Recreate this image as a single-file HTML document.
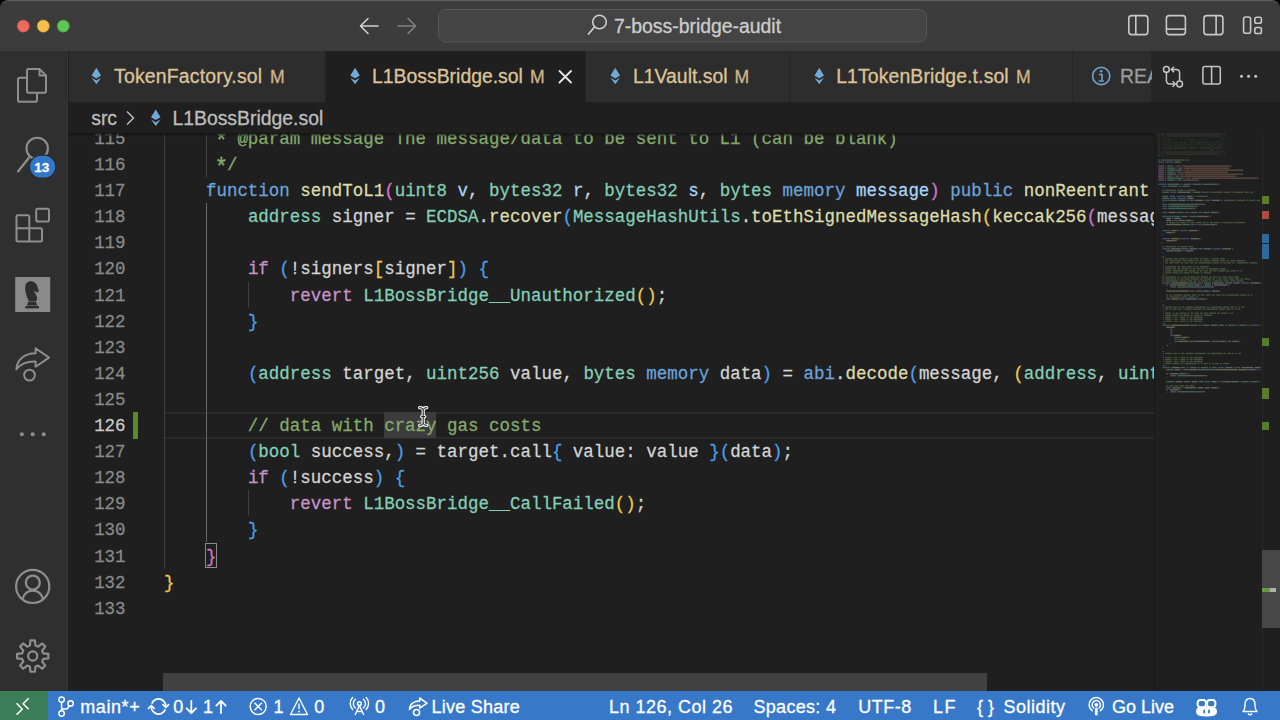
<!DOCTYPE html>
<html><head><meta charset="utf-8"><title>VS Code</title>
<style>
html,body{margin:0;padding:0;width:1280px;height:720px;overflow:hidden;background:#000}
*{box-sizing:border-box}
.win{position:absolute;left:0;top:0;width:1280px;height:720px;border-radius:8px 8px 0 0;overflow:hidden;background:#1f1f1f}
.a{position:absolute}
.ui{font-family:"Liberation Sans",sans-serif;white-space:pre;-webkit-text-stroke:0.3px currentColor}
.mono{font-family:"Liberation Mono",monospace;white-space:pre}
svg{position:absolute;overflow:visible}
.ln{position:absolute;left:68.6px;padding-top:1.4px;width:57px;text-align:right;font-family:"Liberation Mono",monospace;font-size:17.475px;transform:scaleY(1.07);transform-origin:0 19px;-webkit-text-stroke:0.25px currentColor;color:#8a8a8a;height:26.1px;line-height:26.1px}
.cl{position:absolute;left:164px;padding-top:1.4px;font-family:"Liberation Mono",monospace;font-size:17.475px;transform:scaleY(1.07);transform-origin:0 19px;-webkit-text-stroke:0.25px currentColor;white-space:pre;height:26.1px;line-height:26.1px;color:#d4d4d4}
.ast{display:inline-block;transform:translateY(3.2px) scale(1.3)}
</style></head><body>
<div class="win">

<div class="a" style="left:0;top:0;width:1280px;height:51px;background:#3c3c3c;border-top:1px solid #5e5e5e;border-radius:8px 8px 0 0"></div>
<svg style="left:0;top:0" width="1280" height="51"><circle cx="23.3" cy="26.1" r="6.1" fill="#ee6a5e" stroke="#c9493f" stroke-width="0.6"/><circle cx="43.3" cy="26.1" r="6.1" fill="#f5c04a" stroke="#c99a30" stroke-width="0.6"/><circle cx="63.3" cy="26.1" r="6.1" fill="#5fc555" stroke="#3f9a3a" stroke-width="0.6"/><path d="M360.5 26 H378 M368 18.5 L360.5 26 L368 33.5" stroke="#cfcfcf" stroke-width="1.6" fill="none" stroke-linecap="round" stroke-linejoin="round"/><path d="M398 26 H415.5 M408 18.5 L415.5 26 L408 33.5" stroke="#808080" stroke-width="1.6" fill="none" stroke-linecap="round" stroke-linejoin="round"/><rect x="438.5" y="9.5" width="488" height="32.5" rx="8" fill="#444444" stroke="#575757" stroke-width="1"/><circle cx="599.5" cy="22" r="6.8" stroke="#cfcfcf" stroke-width="1.6" fill="none"/><path d="M594.5 27 L588.5 34" stroke="#cfcfcf" stroke-width="1.7" stroke-linecap="round"/><rect x="1128.8" y="15.6" width="19" height="19" rx="2.8" stroke="#c8c8c8" stroke-width="1.6" fill="none"/><path d="M1135.8 15.6 V34.6" stroke="#c8c8c8" stroke-width="1.6"/><rect x="1166.4" y="15.6" width="19" height="19" rx="2.8" stroke="#c8c8c8" stroke-width="1.6" fill="none"/><path d="M1166.4 29.1 H1185.4" stroke="#c8c8c8" stroke-width="1.6"/><rect x="1203.9" y="15.6" width="19" height="19" rx="2.8" stroke="#c8c8c8" stroke-width="1.6" fill="none"/><path d="M1216.1 15.6 V34.6" stroke="#c8c8c8" stroke-width="1.6"/><rect x="1243.6" y="17" width="7" height="16.2" rx="2" stroke="#c8c8c8" stroke-width="1.6" fill="none"/><rect x="1254.8" y="17.2" width="6.6" height="6" rx="1.8" stroke="#c8c8c8" stroke-width="1.6" fill="none"/><rect x="1254.8" y="27.5" width="6.6" height="6" rx="1.8" stroke="#c8c8c8" stroke-width="1.6" fill="none"/></svg>
<div class="a ui" style="left:614px;top:14px;font-size:19.4px;line-height:24px;color:#cccccc">7-boss-bridge-audit</div>
<div class="a" style="left:0;top:51px;width:67.5px;height:640px;background:#2f2f2f"></div>
<div class="a" style="left:67px;top:51px;width:1px;height:640px;background:#343434"></div>
<svg style="left:0;top:0" width="68" height="691"><path d="M27 70.8 Q27 69 28.8 69 H39.5 L46 75.5 V90.9 Q46 92.7 44.2 92.7 H28.8 Q27 92.7 27 90.9 Z" stroke="#8e8e8e" stroke-width="2" fill="none" stroke-linejoin="round"/><path d="M39.5 69 V75.5 H46" stroke="#8e8e8e" stroke-width="2" fill="none" stroke-linejoin="round"/><path d="M27 77.8 H19.8 Q18 77.8 18 79.6 V99.9 Q18 101.7 19.8 101.7 H35.2 Q37 101.7 37 99.9 V92.7" stroke="#8e8e8e" stroke-width="2" fill="none" stroke-linejoin="round"/><circle cx="37.2" cy="148.4" r="10.7" stroke="#8e8e8e" stroke-width="2.1" fill="none"/><path d="M29.5 157 L18 171.5" stroke="#8e8e8e" stroke-width="2.2" stroke-linecap="round"/><rect x="29.5" y="155.2" width="26.3" height="23" rx="11.5" fill="#3277c8" stroke="#2a2a2a" stroke-width="1.2"/><path d="M16.5 241.5 V216.8 Q16.5 215.3 18 215.3 H27.8 Q29.3 215.3 29.3 216.8 V241.5 M16.5 228.3 H40.5 Q42 228.3 42 229.8 V240 Q42 241.5 40.5 241.5 H18 Q16.5 241.5 16.5 240" stroke="#8e8e8e" stroke-width="2" fill="none" stroke-linejoin="round"/><rect x="36.2" y="208.8" width="12.8" height="12.8" rx="1.8" stroke="#8e8e8e" stroke-width="2" fill="none"/><rect x="15.2" y="277" width="35" height="35" fill="#8a8a8a"/><path d="M16.3 369.3 C17 359 25 353.5 35.6 353.3 V348.2 L49 357.6 L35.6 366.8 V361.5 C28 361.2 21 363.5 16.3 369.3 Z" stroke="#8e8e8e" stroke-width="2" fill="none" stroke-linejoin="round"/><circle cx="29.5" cy="375.1" r="5.4" stroke="#8e8e8e" stroke-width="2" fill="none"/><circle cx="21.9" cy="434.3" r="2" fill="#8e8e8e"/><circle cx="32.7" cy="434.3" r="2" fill="#8e8e8e"/><circle cx="43.7" cy="434.3" r="2" fill="#8e8e8e"/><circle cx="32.7" cy="586.4" r="16.6" stroke="#8e8e8e" stroke-width="2.2" fill="none"/><circle cx="32.8" cy="582.6" r="7" stroke="#8e8e8e" stroke-width="2.3" fill="none"/><path d="M22.6 598.6 Q25.2 590.6 32.8 590.6 Q40.4 590.6 43 598.6" stroke="#8e8e8e" stroke-width="2.3" fill="none"/></svg>
<div class="a ui" style="left:28.7px;top:155.6px;width:26.3px;text-align:center;font-size:13.5px;line-height:23px;font-weight:bold;color:#fff">13</div>
<svg style="left:0;top:0" width="68" height="400"><path d="M30.2 281.3 C33.8 281 36.8 283.6 37.6 287.2 L38.7 290.6 Q38.9 292.6 37 292.4 L33.6 290.6 Q35.6 293.8 36.9 296.8 Q37.8 299.6 36.2 300.9 L28.8 300.9 Q26.8 297.4 25.8 293.2 Q24.6 288.4 25.4 285.2 Q26.8 281.6 30.2 281.3 Z" fill="#2e2e2e"/><path d="M28.4 301.6 H35.8 L37.3 305.4 H26.9 Z" fill="#2e2e2e"/><rect x="25.3" y="306" width="13.7" height="2.4" fill="#2e2e2e"/></svg>
<svg style="left:0;top:0" width="68" height="691"><path d="M43.24 653.31 L48.34 653.87 L48.34 658.33 L43.24 658.89 L42.13 661.57 L45.34 665.59 L42.19 668.74 L38.17 665.53 L35.49 666.64 L34.93 671.74 L30.47 671.74 L29.91 666.64 L27.23 665.53 L23.21 668.74 L20.06 665.59 L23.27 661.57 L22.16 658.89 L17.06 658.33 L17.06 653.87 L22.16 653.31 L23.27 650.63 L20.06 646.61 L23.21 643.46 L27.23 646.67 L29.91 645.56 L30.47 640.46 L34.93 640.46 L35.49 645.56 L38.17 646.67 L42.19 643.46 L45.34 646.61 L42.13 650.63 Z" stroke="#8e8e8e" stroke-width="2.2" fill="none" stroke-linejoin="round"/><circle cx="32.7" cy="656" r="4.6" stroke="#8e8e8e" stroke-width="2.2" fill="none"/></svg>
<div class="a" style="left:68.5px;top:51px;width:1211.5px;height:51px;background:#262626"></div>
<div class="a" style="left:68.5px;top:51px;width:257.0px;height:51px;background:#2d2d2d;border-right:1px solid #252525"></div>
<div class="a" style="left:325.5px;top:51px;width:260.5px;height:51px;background:#1f1f1f;border-right:1px solid #252525"></div>
<div class="a" style="left:586px;top:51px;width:204px;height:51px;background:#2d2d2d;border-right:1px solid #252525"></div>
<div class="a" style="left:790px;top:51px;width:282.5px;height:51px;background:#2d2d2d;border-right:1px solid #252525"></div>
<div class="a" style="left:1072.5px;top:51px;width:79.0px;height:51px;background:#2d2d2d;border-right:1px solid #252525"></div>
<div class="a" style="left:68.5px;top:102px;width:1211.5px;height:31px;background:#1f1f1f"></div>
<svg style="left:0;top:0" width="1280" height="140"><path d="M96.35 67.8 L101.1 75.5 L96.35 78.39999999999999 L91.6 75.5 Z" fill="#73a9d6"/><path d="M91.6 77.8 L96.35 80.6 L101.1 77.8 L96.35 84.3 Z" fill="#73a9d6"/><path d="M355.05 67.8 L359.8 75.5 L355.05 78.39999999999999 L350.3 75.5 Z" fill="#73a9d6"/><path d="M350.3 77.8 L355.05 80.6 L359.8 77.8 L355.05 84.3 Z" fill="#73a9d6"/><path d="M615.25 67.8 L620.0 75.5 L615.25 78.39999999999999 L610.5 75.5 Z" fill="#73a9d6"/><path d="M610.5 77.8 L615.25 80.6 L620.0 77.8 L615.25 84.3 Z" fill="#73a9d6"/><path d="M819.25 67.8 L824.0 75.5 L819.25 78.39999999999999 L814.5 75.5 Z" fill="#73a9d6"/><path d="M814.5 77.8 L819.25 80.6 L824.0 77.8 L819.25 84.3 Z" fill="#73a9d6"/><path d="M155.75 109.5 L160.5 117.2 L155.75 120.1 L151 117.2 Z" fill="#73a9d6"/><path d="M151 119.5 L155.75 122.3 L160.5 119.5 L155.75 126.0 Z" fill="#73a9d6"/><path d="M559.5 71 L571 82.5 M571 71 L559.5 82.5" stroke="#e8e8e8" stroke-width="1.8" stroke-linecap="round"/><circle cx="1101.2" cy="76" r="8.6" stroke="#6e9cc4" stroke-width="1.7" fill="none"/><circle cx="1101.2" cy="71.3" r="1.3" fill="#6e9cc4"/><path d="M1099 74.5 H1102 V81 M1098.8 81 H1103.8" stroke="#6e9cc4" stroke-width="1.7" fill="none"/><circle cx="1166.4" cy="69.4" r="2.9" stroke="#c5c5c5" stroke-width="1.5" fill="none"/><circle cx="1179.6" cy="84" r="2.9" stroke="#c5c5c5" stroke-width="1.5" fill="none"/><path d="M1166.4 72.3 V80.5 Q1166.4 84 1169.9 84 H1175" stroke="#c5c5c5" stroke-width="1.5" fill="none"/><path d="M1172.6 81.3 L1175.3 84 L1172.6 86.7" stroke="#c5c5c5" stroke-width="1.5" fill="none"/><path d="M1179.6 81.1 V73 Q1179.6 69.4 1176.1 69.4 H1171.5" stroke="#c5c5c5" stroke-width="1.5" fill="none"/><path d="M1174 66.7 L1171.3 69.4 L1174 72.1" stroke="#c5c5c5" stroke-width="1.5" fill="none"/><rect x="1202.9" y="66.6" width="17.4" height="17.4" rx="2" stroke="#c5c5c5" stroke-width="1.5" fill="none"/><path d="M1211.6 66.6 V84" stroke="#c5c5c5" stroke-width="1.5"/><circle cx="1241.5" cy="76.3" r="1.5" fill="#c5c5c5"/><circle cx="1248.6" cy="76.3" r="1.5" fill="#c5c5c5"/><circle cx="1255.7" cy="76.3" r="1.5" fill="#c5c5c5"/><path d="M127 111.5 L133.5 118 L127 124.5" stroke="#bdbdbd" stroke-width="1.5" fill="none"/></svg>
<div class="a ui" style="left:114px;top:64px;font-size:19.4px;line-height:24px;color:#dcc397;letter-spacing:0.2px;font-weight:normal">TokenFactory.sol</div>
<div class="a ui" style="left:270px;top:64.5px;font-size:17.6px;line-height:24px;color:#cdb48b;letter-spacing:0px;font-weight:normal">M</div>
<div class="a ui" style="left:372px;top:64px;font-size:19.4px;line-height:24px;color:#dcc397;letter-spacing:0px;font-weight:normal">L1BossBridge.sol</div>
<div class="a ui" style="left:530px;top:64.5px;font-size:17.6px;line-height:24px;color:#cdb48b;letter-spacing:0px;font-weight:normal">M</div>
<div class="a ui" style="left:633px;top:64px;font-size:19.4px;line-height:24px;color:#dcc397;letter-spacing:0px;font-weight:normal">L1Vault.sol</div>
<div class="a ui" style="left:734.5px;top:64.5px;font-size:17.6px;line-height:24px;color:#cdb48b;letter-spacing:0px;font-weight:normal">M</div>
<div class="a ui" style="left:836.2px;top:64px;font-size:19.4px;line-height:24px;color:#dcc397;letter-spacing:0.12px;font-weight:normal">L1TokenBridge.t.sol</div>
<div class="a ui" style="left:1016px;top:64.5px;font-size:17.6px;line-height:24px;color:#cdb48b;letter-spacing:0px;font-weight:normal">M</div>
<div class="a" style="left:1120px;top:51px;width:31.5px;height:51px;overflow:hidden"><div class="a ui" style="left:0px;top:13px;font-size:19.4px;line-height:24px;color:#9d9d9d;letter-spacing:0px;font-weight:normal">README.md</div></div>
<div class="a ui" style="left:91.2px;top:106px;font-size:19.4px;line-height:24px;color:#bdbdbd;letter-spacing:0px;font-weight:normal">src</div>
<div class="a ui" style="left:172.4px;top:106px;font-size:19.4px;line-height:24px;color:#bdbdbd;letter-spacing:0px;font-weight:normal">L1BossBridge.sol</div>
<div class="a" style="left:68.5px;top:133px;width:1085px;height:558px;overflow:hidden;background:#1f1f1f">
<div class="a" style="left:-68.5px;top:-133px;width:1280px;height:720px">
<div class="a" style="left:163px;top:412.00px;width:1000px;height:26.6px;border-top:2px solid #2a2a2a;border-bottom:2px solid #2a2a2a"></div>
<div class="a" style="left:384px;top:412.30px;width:52px;height:26px;background:#3c3c3c"></div>
<div class="a" style="left:163.8px;top:125.00px;width:1.5px;height:443.60px;background:#3e3e3e"></div>
<div class="a" style="left:205.6px;top:125.00px;width:1.5px;height:52.10px;background:#444444"></div>
<div class="a" style="left:205.6px;top:203.20px;width:1.6px;height:339.30px;background:#6a6a6a"></div>
<div class="a" style="left:247.6px;top:281.50px;width:1.5px;height:26.10px;background:#3e3e3e"></div>
<div class="a" style="left:247.6px;top:490.30px;width:1.5px;height:26.10px;background:#3e3e3e"></div>
<div class="a" style="left:205px;top:543.00px;width:11.5px;height:25px;border:1px solid #8b8b8b"></div>
<div class="a" style="left:133.2px;top:412.00px;width:4.6px;height:26.60px;background:#5b8a2b"></div>
<div class="ln" style="top:124.90px;color:#8a8a8a">115</div>
<div class="cl" style="top:124.90px"><span style="color:#86aa6e">     <span class="ast">*</span> @param message The message/data to be sent to L1 (can be blank)</span></div>
<div class="ln" style="top:151.00px;color:#8a8a8a">116</div>
<div class="cl" style="top:151.00px"><span style="color:#86aa6e">     <span class="ast">*</span>/</span></div>
<div class="ln" style="top:177.10px;color:#8a8a8a">117</div>
<div class="cl" style="top:177.10px"><span style="color:#d4d4d4">    </span><span style="color:#6ba3dc">function</span><span style="color:#d4d4d4"> </span><span style="color:#dcdcaa">sendToL1</span><span style="color:#d077cf">(</span><span style="color:#84cfb8">uint8</span><span style="color:#d4d4d4"> </span><span style="color:#a8d6f8">v</span><span style="color:#d4d4d4">, </span><span style="color:#84cfb8">bytes32</span><span style="color:#d4d4d4"> </span><span style="color:#a8d6f8">r</span><span style="color:#d4d4d4">, </span><span style="color:#84cfb8">bytes32</span><span style="color:#d4d4d4"> </span><span style="color:#a8d6f8">s</span><span style="color:#d4d4d4">, </span><span style="color:#84cfb8">bytes</span><span style="color:#d4d4d4"> </span><span style="color:#6ba3dc">memory</span><span style="color:#d4d4d4"> </span><span style="color:#a8d6f8">message</span><span style="color:#d077cf">)</span><span style="color:#d4d4d4"> </span><span style="color:#6ba3dc">public</span><span style="color:#d4d4d4"> </span><span style="color:#dcdcaa">nonReentrant</span><span style="color:#d4d4d4"> </span><span style="color:#dcdcaa">whenNotPaused</span><span style="color:#d4d4d4"> </span><span style="color:#d077cf">{</span></div>
<div class="ln" style="top:203.20px;color:#8a8a8a">118</div>
<div class="cl" style="top:203.20px"><span style="color:#d4d4d4">        </span><span style="color:#84cfb8">address</span><span style="color:#d4d4d4"> signer = </span><span style="color:#84cfb8">ECDSA</span><span style="color:#d4d4d4">.</span><span style="color:#dcdcaa">recover</span><span style="color:#4d9fea">(</span><span style="color:#84cfb8">MessageHashUtils</span><span style="color:#d4d4d4">.</span><span style="color:#dcdcaa">toEthSignedMessageHash</span><span style="color:#eacb55">(</span><span style="color:#dcdcaa">keccak256</span><span style="color:#d077cf">(</span><span style="color:#d4d4d4">message</span><span style="color:#d077cf">)</span><span style="color:#eacb55">)</span><span style="color:#d4d4d4">, v, r, s</span><span style="color:#4d9fea">)</span><span style="color:#d4d4d4">;</span></div>
<div class="ln" style="top:229.30px;color:#8a8a8a">119</div>
<div class="ln" style="top:255.40px;color:#8a8a8a">120</div>
<div class="cl" style="top:255.40px"><span style="color:#d4d4d4">        </span><span style="color:#c794c9">if</span><span style="color:#d4d4d4"> </span><span style="color:#4d9fea">(</span><span style="color:#d4d4d4">!signers</span><span style="color:#eacb55">[</span><span style="color:#d4d4d4">signer</span><span style="color:#eacb55">]</span><span style="color:#4d9fea">)</span><span style="color:#d4d4d4"> </span><span style="color:#4d9fea">{</span></div>
<div class="ln" style="top:281.50px;color:#8a8a8a">121</div>
<div class="cl" style="top:281.50px"><span style="color:#d4d4d4">            </span><span style="color:#c794c9">revert</span><span style="color:#d4d4d4"> </span><span style="color:#84cfb8">L1BossBridge__Unauthorized</span><span style="color:#eacb55">()</span><span style="color:#d4d4d4">;</span></div>
<div class="ln" style="top:307.60px;color:#8a8a8a">122</div>
<div class="cl" style="top:307.60px"><span style="color:#d4d4d4">        </span><span style="color:#4d9fea">}</span></div>
<div class="ln" style="top:333.70px;color:#8a8a8a">123</div>
<div class="ln" style="top:359.80px;color:#8a8a8a">124</div>
<div class="cl" style="top:359.80px"><span style="color:#d4d4d4">        </span><span style="color:#4d9fea">(</span><span style="color:#84cfb8">address</span><span style="color:#d4d4d4"> target, </span><span style="color:#84cfb8">uint256</span><span style="color:#d4d4d4"> value, </span><span style="color:#84cfb8">bytes</span><span style="color:#d4d4d4"> </span><span style="color:#6ba3dc">memory</span><span style="color:#d4d4d4"> data</span><span style="color:#4d9fea">)</span><span style="color:#d4d4d4"> = </span><span style="color:#6ba3dc">abi</span><span style="color:#d4d4d4">.</span><span style="color:#dcdcaa">decode</span><span style="color:#4d9fea">(</span><span style="color:#d4d4d4">message, </span><span style="color:#eacb55">(</span><span style="color:#84cfb8">address</span><span style="color:#d4d4d4">, </span><span style="color:#84cfb8">uint256</span><span style="color:#d4d4d4">, </span><span style="color:#84cfb8">bytes</span><span style="color:#eacb55">)</span><span style="color:#4d9fea">)</span><span style="color:#d4d4d4">;</span></div>
<div class="ln" style="top:385.90px;color:#8a8a8a">125</div>
<div class="ln" style="top:412.00px;color:#cccccc">126</div>
<div class="cl" style="top:412.00px"><span style="color:#86aa6e">        // data with crazy gas costs</span></div>
<div class="ln" style="top:438.10px;color:#8a8a8a">127</div>
<div class="cl" style="top:438.10px"><span style="color:#d4d4d4">        </span><span style="color:#4d9fea">(</span><span style="color:#84cfb8">bool</span><span style="color:#d4d4d4"> success,</span><span style="color:#4d9fea">)</span><span style="color:#d4d4d4"> = target.call</span><span style="color:#4d9fea">{</span><span style="color:#d4d4d4"> value: value </span><span style="color:#4d9fea">}</span><span style="color:#4d9fea">(</span><span style="color:#d4d4d4">data</span><span style="color:#4d9fea">)</span><span style="color:#d4d4d4">;</span></div>
<div class="ln" style="top:464.20px;color:#8a8a8a">128</div>
<div class="cl" style="top:464.20px"><span style="color:#d4d4d4">        </span><span style="color:#c794c9">if</span><span style="color:#d4d4d4"> </span><span style="color:#4d9fea">(</span><span style="color:#d4d4d4">!success</span><span style="color:#4d9fea">)</span><span style="color:#d4d4d4"> </span><span style="color:#4d9fea">{</span></div>
<div class="ln" style="top:490.30px;color:#8a8a8a">129</div>
<div class="cl" style="top:490.30px"><span style="color:#d4d4d4">            </span><span style="color:#c794c9">revert</span><span style="color:#d4d4d4"> </span><span style="color:#84cfb8">L1BossBridge__CallFailed</span><span style="color:#eacb55">()</span><span style="color:#d4d4d4">;</span></div>
<div class="ln" style="top:516.40px;color:#8a8a8a">130</div>
<div class="cl" style="top:516.40px"><span style="color:#d4d4d4">        </span><span style="color:#4d9fea">}</span></div>
<div class="ln" style="top:542.50px;color:#8a8a8a">131</div>
<div class="cl" style="top:542.50px"><span style="color:#d4d4d4">    </span><span style="color:#d077cf">}</span></div>
<div class="ln" style="top:568.60px;color:#8a8a8a">132</div>
<div class="cl" style="top:568.60px"><span style="color:#eacb55">}</span></div>
<div class="ln" style="top:594.70px;color:#8a8a8a">133</div>
</div>
</div>
<div class="a" style="left:68.5px;top:133px;width:1085px;height:4px;background:linear-gradient(#141414,rgba(20,20,20,0))"></div>
<svg style="left:0;top:0" width="1280" height="720"><path d="M419.6 407.6 Q422.6 407.4 423.2 409.6 Q423.8 407.4 426.8 407.6 M423.2 409.6 V423.4 M421.6 416.6 H424.8 M419.6 425.4 Q422.6 425.6 423.2 423.4 Q423.8 425.6 426.8 425.4" stroke="#f4f4f4" stroke-width="3.2" fill="none" stroke-linecap="round" stroke-linejoin="round"/><path d="M419.6 407.6 Q422.6 407.4 423.2 409.6 Q423.8 407.4 426.8 407.6 M423.2 409.6 V423.4 M421.6 416.6 H424.8 M419.6 425.4 Q422.6 425.6 423.2 423.4 Q423.8 425.6 426.8 425.4" stroke="#1a1a1a" stroke-width="1.0" fill="none" stroke-linecap="round"/></svg>
<div class="a" style="left:163px;top:672.5px;width:824px;height:18.5px;background:#414141"></div>
<div class="a" style="left:1153.5px;top:133px;width:108px;height:558px;background:#1f1f1f;border-left:1px solid #181818"></div>
<svg style="left:0;top:0" width="1280" height="720"><g opacity="0.36"><rect x="1158.2" y="133.5" width="1.8" height="0.9" fill="#86aa6e" opacity="0.6"/><rect x="1161.2" y="133.5" width="2.8" height="0.9" fill="#86aa6e" opacity="0.6"/><rect x="1165.3" y="133.5" width="55.6" height="0.9" fill="#86aa6e" opacity="0.6"/><rect x="1222.1" y="133.5" width="2.8" height="0.9" fill="#86aa6e" opacity="0.6"/><rect x="1158.2" y="135.5" width="1.8" height="0.9" fill="#86aa6e" opacity="0.6"/><rect x="1161.2" y="135.5" width="1.8" height="0.9" fill="#86aa6e" opacity="0.6"/><rect x="1166.3" y="135.5" width="53.5" height="0.9" fill="#86aa6e" opacity="0.6"/><rect x="1223.2" y="135.5" width="1.8" height="0.9" fill="#86aa6e" opacity="0.6"/><rect x="1158.2" y="137.5" width="1.8" height="0.9" fill="#86aa6e" opacity="0.6"/><rect x="1163.3" y="137.5" width="0.8" height="0.9" fill="#86aa6e" opacity="0.6"/><rect x="1165.3" y="137.5" width="0.8" height="0.9" fill="#86aa6e" opacity="0.6"/><rect x="1220.1" y="137.5" width="0.8" height="0.9" fill="#86aa6e" opacity="0.6"/><rect x="1222.1" y="137.5" width="0.8" height="0.9" fill="#86aa6e" opacity="0.6"/><rect x="1158.2" y="139.5" width="1.8" height="0.9" fill="#86aa6e" opacity="0.6"/><rect x="1163.3" y="139.5" width="0.8" height="0.9" fill="#86aa6e" opacity="0.6"/><rect x="1165.3" y="139.5" width="0.8" height="0.9" fill="#86aa6e" opacity="0.6"/><rect x="1167.3" y="139.5" width="3.8" height="0.9" fill="#86aa6e" opacity="0.6"/><rect x="1189.7" y="139.5" width="3.8" height="0.9" fill="#86aa6e" opacity="0.6"/><rect x="1200.8" y="139.5" width="0.8" height="0.9" fill="#86aa6e" opacity="0.6"/><rect x="1206.9" y="139.5" width="0.8" height="0.9" fill="#86aa6e" opacity="0.6"/><rect x="1220.1" y="139.5" width="0.8" height="0.9" fill="#86aa6e" opacity="0.6"/><rect x="1222.1" y="139.5" width="0.8" height="0.9" fill="#86aa6e" opacity="0.6"/><rect x="1158.2" y="141.6" width="1.8" height="0.9" fill="#86aa6e" opacity="0.6"/><rect x="1163.3" y="141.6" width="0.8" height="0.9" fill="#86aa6e" opacity="0.6"/><rect x="1165.3" y="141.6" width="1.8" height="0.9" fill="#86aa6e" opacity="0.6"/><rect x="1168.4" y="141.6" width="1.8" height="0.9" fill="#86aa6e" opacity="0.6"/><rect x="1171.4" y="141.6" width="0.8" height="0.9" fill="#86aa6e" opacity="0.6"/><rect x="1174.4" y="141.6" width="2.8" height="0.9" fill="#86aa6e" opacity="0.6"/><rect x="1179.5" y="141.6" width="2.8" height="0.9" fill="#86aa6e" opacity="0.6"/><rect x="1183.6" y="141.6" width="2.8" height="0.9" fill="#86aa6e" opacity="0.6"/><rect x="1188.7" y="141.6" width="0.8" height="0.9" fill="#86aa6e" opacity="0.6"/><rect x="1190.7" y="141.6" width="1.8" height="0.9" fill="#86aa6e" opacity="0.6"/><rect x="1193.7" y="141.6" width="0.8" height="0.9" fill="#86aa6e" opacity="0.6"/><rect x="1195.8" y="141.6" width="0.8" height="0.9" fill="#86aa6e" opacity="0.6"/><rect x="1197.8" y="141.6" width="4.8" height="0.9" fill="#86aa6e" opacity="0.6"/><rect x="1203.9" y="141.6" width="2.8" height="0.9" fill="#86aa6e" opacity="0.6"/><rect x="1207.9" y="141.6" width="0.8" height="0.9" fill="#86aa6e" opacity="0.6"/><rect x="1210.0" y="141.6" width="1.8" height="0.9" fill="#86aa6e" opacity="0.6"/><rect x="1213.0" y="141.6" width="0.8" height="0.9" fill="#86aa6e" opacity="0.6"/><rect x="1216.1" y="141.6" width="2.8" height="0.9" fill="#86aa6e" opacity="0.6"/><rect x="1220.1" y="141.6" width="0.8" height="0.9" fill="#86aa6e" opacity="0.6"/><rect x="1222.1" y="141.6" width="0.8" height="0.9" fill="#86aa6e" opacity="0.6"/><rect x="1158.2" y="143.6" width="1.8" height="0.9" fill="#86aa6e" opacity="0.6"/><rect x="1163.3" y="143.6" width="0.8" height="0.9" fill="#86aa6e" opacity="0.6"/><rect x="1165.3" y="143.6" width="1.8" height="0.9" fill="#86aa6e" opacity="0.6"/><rect x="1169.4" y="143.6" width="0.8" height="0.9" fill="#86aa6e" opacity="0.6"/><rect x="1171.4" y="143.6" width="0.8" height="0.9" fill="#86aa6e" opacity="0.6"/><rect x="1173.4" y="143.6" width="0.8" height="0.9" fill="#86aa6e" opacity="0.6"/><rect x="1175.5" y="143.6" width="0.8" height="0.9" fill="#86aa6e" opacity="0.6"/><rect x="1177.5" y="143.6" width="1.8" height="0.9" fill="#86aa6e" opacity="0.6"/><rect x="1180.5" y="143.6" width="2.8" height="0.9" fill="#86aa6e" opacity="0.6"/><rect x="1184.6" y="143.6" width="2.8" height="0.9" fill="#86aa6e" opacity="0.6"/><rect x="1188.7" y="143.6" width="0.8" height="0.9" fill="#86aa6e" opacity="0.6"/><rect x="1191.7" y="143.6" width="0.8" height="0.9" fill="#86aa6e" opacity="0.6"/><rect x="1193.7" y="143.6" width="1.8" height="0.9" fill="#86aa6e" opacity="0.6"/><rect x="1196.8" y="143.6" width="3.8" height="0.9" fill="#86aa6e" opacity="0.6"/><rect x="1201.8" y="143.6" width="1.8" height="0.9" fill="#86aa6e" opacity="0.6"/><rect x="1204.9" y="143.6" width="1.8" height="0.9" fill="#86aa6e" opacity="0.6"/><rect x="1207.9" y="143.6" width="1.8" height="0.9" fill="#86aa6e" opacity="0.6"/><rect x="1211.0" y="143.6" width="1.8" height="0.9" fill="#86aa6e" opacity="0.6"/><rect x="1214.0" y="143.6" width="1.8" height="0.9" fill="#86aa6e" opacity="0.6"/><rect x="1217.1" y="143.6" width="0.8" height="0.9" fill="#86aa6e" opacity="0.6"/><rect x="1219.1" y="143.6" width="1.8" height="0.9" fill="#86aa6e" opacity="0.6"/><rect x="1222.1" y="143.6" width="0.8" height="0.9" fill="#86aa6e" opacity="0.6"/><rect x="1158.2" y="145.6" width="1.8" height="0.9" fill="#86aa6e" opacity="0.6"/><rect x="1163.3" y="145.6" width="0.8" height="0.9" fill="#86aa6e" opacity="0.6"/><rect x="1165.3" y="145.6" width="1.8" height="0.9" fill="#86aa6e" opacity="0.6"/><rect x="1168.4" y="145.6" width="2.8" height="0.9" fill="#86aa6e" opacity="0.6"/><rect x="1172.4" y="145.6" width="0.8" height="0.9" fill="#86aa6e" opacity="0.6"/><rect x="1174.4" y="145.6" width="2.8" height="0.9" fill="#86aa6e" opacity="0.6"/><rect x="1178.5" y="145.6" width="2.8" height="0.9" fill="#86aa6e" opacity="0.6"/><rect x="1182.6" y="145.6" width="2.8" height="0.9" fill="#86aa6e" opacity="0.6"/><rect x="1186.6" y="145.6" width="0.8" height="0.9" fill="#86aa6e" opacity="0.6"/><rect x="1188.7" y="145.6" width="0.8" height="0.9" fill="#86aa6e" opacity="0.6"/><rect x="1190.7" y="145.6" width="2.8" height="0.9" fill="#86aa6e" opacity="0.6"/><rect x="1194.7" y="145.6" width="0.8" height="0.9" fill="#86aa6e" opacity="0.6"/><rect x="1196.8" y="145.6" width="0.8" height="0.9" fill="#86aa6e" opacity="0.6"/><rect x="1199.8" y="145.6" width="0.8" height="0.9" fill="#86aa6e" opacity="0.6"/><rect x="1201.8" y="145.6" width="0.8" height="0.9" fill="#86aa6e" opacity="0.6"/><rect x="1203.9" y="145.6" width="2.8" height="0.9" fill="#86aa6e" opacity="0.6"/><rect x="1207.9" y="145.6" width="0.8" height="0.9" fill="#86aa6e" opacity="0.6"/><rect x="1210.0" y="145.6" width="2.8" height="0.9" fill="#86aa6e" opacity="0.6"/><rect x="1214.0" y="145.6" width="0.8" height="0.9" fill="#86aa6e" opacity="0.6"/><rect x="1217.1" y="145.6" width="3.8" height="0.9" fill="#86aa6e" opacity="0.6"/><rect x="1222.1" y="145.6" width="0.8" height="0.9" fill="#86aa6e" opacity="0.6"/><rect x="1158.2" y="147.6" width="1.8" height="0.9" fill="#86aa6e" opacity="0.6"/><rect x="1163.3" y="147.6" width="0.8" height="0.9" fill="#86aa6e" opacity="0.6"/><rect x="1165.3" y="147.6" width="6.9" height="0.9" fill="#86aa6e" opacity="0.6"/><rect x="1173.4" y="147.6" width="14.0" height="0.9" fill="#86aa6e" opacity="0.6"/><rect x="1188.7" y="147.6" width="8.9" height="0.9" fill="#86aa6e" opacity="0.6"/><rect x="1199.8" y="147.6" width="12.9" height="0.9" fill="#86aa6e" opacity="0.6"/><rect x="1214.0" y="147.6" width="6.9" height="0.9" fill="#86aa6e" opacity="0.6"/><rect x="1222.1" y="147.6" width="0.8" height="0.9" fill="#86aa6e" opacity="0.6"/><rect x="1158.2" y="149.6" width="1.8" height="0.9" fill="#86aa6e" opacity="0.6"/><rect x="1163.3" y="149.6" width="0.8" height="0.9" fill="#86aa6e" opacity="0.6"/><rect x="1165.3" y="149.6" width="0.8" height="0.9" fill="#86aa6e" opacity="0.6"/><rect x="1209.0" y="149.6" width="4.8" height="0.9" fill="#86aa6e" opacity="0.6"/><rect x="1220.1" y="149.6" width="0.8" height="0.9" fill="#86aa6e" opacity="0.6"/><rect x="1222.1" y="149.6" width="0.8" height="0.9" fill="#86aa6e" opacity="0.6"/><rect x="1158.2" y="151.6" width="1.8" height="0.9" fill="#86aa6e" opacity="0.6"/><rect x="1161.2" y="151.6" width="2.8" height="0.9" fill="#86aa6e" opacity="0.6"/><rect x="1165.3" y="151.6" width="55.6" height="0.9" fill="#86aa6e" opacity="0.6"/><rect x="1222.1" y="151.6" width="2.8" height="0.9" fill="#86aa6e" opacity="0.6"/><rect x="1158.2" y="153.7" width="1.8" height="0.9" fill="#86aa6e" opacity="0.6"/><rect x="1161.2" y="153.7" width="1.8" height="0.9" fill="#86aa6e" opacity="0.6"/><rect x="1166.3" y="153.7" width="53.5" height="0.9" fill="#86aa6e" opacity="0.6"/><rect x="1223.2" y="153.7" width="1.8" height="0.9" fill="#86aa6e" opacity="0.6"/><rect x="1158.2" y="155.7" width="1.8" height="0.9" fill="#86aa6e" opacity="0.6"/><rect x="1163.3" y="155.7" width="0.8" height="0.9" fill="#86aa6e" opacity="0.6"/><rect x="1165.3" y="155.7" width="0.8" height="0.9" fill="#86aa6e" opacity="0.6"/><rect x="1220.1" y="155.7" width="0.8" height="0.9" fill="#86aa6e" opacity="0.6"/><rect x="1222.1" y="155.7" width="0.8" height="0.9" fill="#86aa6e" opacity="0.6"/><rect x="1158.2" y="159.4" width="1.8" height="1.35" fill="#86aa6e"/><rect x="1161.2" y="159.4" width="24.1" height="1.35" fill="#86aa6e"/><rect x="1186.6" y="159.4" width="2.8" height="1.35" fill="#86aa6e"/><rect x="1158.2" y="161.4" width="5.8" height="1.35" fill="#6ba3dc"/><rect x="1165.3" y="161.4" width="7.9" height="1.35" fill="#6ba3dc"/><rect x="1174.4" y="161.4" width="5.8" height="1.35" fill="#b5cea8"/><rect x="1180.5" y="161.4" width="0.8" height="1.35" fill="#d4d4d4"/><rect x="1158.2" y="165.4" width="5.8" height="1.35" fill="#c794c9"/><rect x="1165.3" y="165.4" width="0.8" height="1.35" fill="#eacb55"/><rect x="1167.3" y="165.4" width="5.8" height="1.35" fill="#84cfb8"/><rect x="1174.4" y="165.4" width="0.8" height="1.35" fill="#eacb55"/><rect x="1176.5" y="165.4" width="3.8" height="1.35" fill="#c794c9"/><rect x="1181.5" y="165.4" width="48.5" height="1.35" fill="#ce9178"/><rect x="1230.3" y="165.4" width="0.8" height="1.35" fill="#d4d4d4"/><rect x="1158.2" y="167.5" width="5.8" height="1.35" fill="#c794c9"/><rect x="1165.3" y="167.5" width="0.8" height="1.35" fill="#eacb55"/><rect x="1167.3" y="167.5" width="7.9" height="1.35" fill="#84cfb8"/><rect x="1176.5" y="167.5" width="0.8" height="1.35" fill="#eacb55"/><rect x="1178.5" y="167.5" width="3.8" height="1.35" fill="#c794c9"/><rect x="1183.6" y="167.5" width="44.4" height="1.35" fill="#ce9178"/><rect x="1228.2" y="167.5" width="0.8" height="1.35" fill="#d4d4d4"/><rect x="1158.2" y="169.5" width="5.8" height="1.35" fill="#c794c9"/><rect x="1165.3" y="169.5" width="0.8" height="1.35" fill="#eacb55"/><rect x="1167.3" y="169.5" width="15.0" height="1.35" fill="#84cfb8"/><rect x="1183.6" y="169.5" width="0.8" height="1.35" fill="#eacb55"/><rect x="1185.6" y="169.5" width="3.8" height="1.35" fill="#c794c9"/><rect x="1190.7" y="169.5" width="51.5" height="1.35" fill="#ce9178"/><rect x="1242.4" y="169.5" width="0.8" height="1.35" fill="#d4d4d4"/><rect x="1158.2" y="171.5" width="5.8" height="1.35" fill="#c794c9"/><rect x="1165.3" y="171.5" width="0.8" height="1.35" fill="#eacb55"/><rect x="1167.3" y="171.5" width="6.9" height="1.35" fill="#84cfb8"/><rect x="1175.5" y="171.5" width="0.8" height="1.35" fill="#eacb55"/><rect x="1177.5" y="171.5" width="3.8" height="1.35" fill="#c794c9"/><rect x="1182.6" y="171.5" width="44.4" height="1.35" fill="#ce9178"/><rect x="1227.2" y="171.5" width="0.8" height="1.35" fill="#d4d4d4"/><rect x="1158.2" y="173.5" width="5.8" height="1.35" fill="#c794c9"/><rect x="1165.3" y="173.5" width="0.8" height="1.35" fill="#eacb55"/><rect x="1167.3" y="173.5" width="8.9" height="1.35" fill="#84cfb8"/><rect x="1177.5" y="173.5" width="0.8" height="1.35" fill="#eacb55"/><rect x="1179.5" y="173.5" width="3.8" height="1.35" fill="#c794c9"/><rect x="1184.6" y="173.5" width="57.6" height="1.35" fill="#ce9178"/><rect x="1242.4" y="173.5" width="0.8" height="1.35" fill="#d4d4d4"/><rect x="1158.2" y="175.5" width="5.8" height="1.35" fill="#c794c9"/><rect x="1165.3" y="175.5" width="0.8" height="1.35" fill="#eacb55"/><rect x="1167.3" y="175.5" width="4.8" height="1.35" fill="#84cfb8"/><rect x="1173.4" y="175.5" width="0.8" height="1.35" fill="#eacb55"/><rect x="1175.5" y="175.5" width="3.8" height="1.35" fill="#c794c9"/><rect x="1180.5" y="175.5" width="54.6" height="1.35" fill="#ce9178"/><rect x="1235.3" y="175.5" width="0.8" height="1.35" fill="#d4d4d4"/><rect x="1158.2" y="177.5" width="5.8" height="1.35" fill="#c794c9"/><rect x="1165.3" y="177.5" width="0.8" height="1.35" fill="#eacb55"/><rect x="1167.3" y="177.5" width="16.0" height="1.35" fill="#84cfb8"/><rect x="1184.6" y="177.5" width="0.8" height="1.35" fill="#eacb55"/><rect x="1186.6" y="177.5" width="3.8" height="1.35" fill="#c794c9"/><rect x="1191.7" y="177.5" width="65.7" height="1.35" fill="#ce9178"/><rect x="1257.7" y="177.5" width="0.8" height="1.35" fill="#d4d4d4"/><rect x="1158.2" y="179.5" width="5.8" height="1.35" fill="#c794c9"/><rect x="1165.3" y="179.5" width="0.8" height="1.35" fill="#eacb55"/><rect x="1167.3" y="179.5" width="6.9" height="1.35" fill="#84cfb8"/><rect x="1175.5" y="179.5" width="0.8" height="1.35" fill="#eacb55"/><rect x="1177.5" y="179.5" width="3.8" height="1.35" fill="#c794c9"/><rect x="1182.6" y="179.5" width="15.0" height="1.35" fill="#ce9178"/><rect x="1197.8" y="179.5" width="0.8" height="1.35" fill="#d4d4d4"/><rect x="1158.2" y="183.6" width="7.9" height="1.35" fill="#6ba3dc"/><rect x="1167.3" y="183.6" width="11.9" height="1.35" fill="#84cfb8"/><rect x="1180.5" y="183.6" width="1.8" height="1.35" fill="#6ba3dc"/><rect x="1183.6" y="183.6" width="6.9" height="1.35" fill="#84cfb8"/><rect x="1190.7" y="183.6" width="0.8" height="1.35" fill="#d4d4d4"/><rect x="1192.7" y="183.6" width="7.9" height="1.35" fill="#84cfb8"/><rect x="1200.8" y="183.6" width="0.8" height="1.35" fill="#d4d4d4"/><rect x="1202.9" y="183.6" width="15.0" height="1.35" fill="#84cfb8"/><rect x="1219.1" y="183.6" width="0.8" height="1.35" fill="#eacb55"/><rect x="1162.3" y="185.6" width="4.8" height="1.35" fill="#6ba3dc"/><rect x="1168.4" y="185.6" width="8.9" height="1.35" fill="#84cfb8"/><rect x="1178.5" y="185.6" width="2.8" height="1.35" fill="#6ba3dc"/><rect x="1182.6" y="185.6" width="5.8" height="1.35" fill="#84cfb8"/><rect x="1188.7" y="185.6" width="0.8" height="1.35" fill="#d4d4d4"/><rect x="1162.3" y="189.6" width="1.8" height="1.35" fill="#86aa6e"/><rect x="1165.3" y="189.6" width="10.9" height="1.35" fill="#86aa6e"/><rect x="1177.5" y="189.6" width="5.8" height="1.35" fill="#86aa6e"/><rect x="1184.6" y="189.6" width="1.8" height="1.35" fill="#86aa6e"/><rect x="1187.6" y="189.6" width="7.9" height="1.35" fill="#86aa6e"/><rect x="1162.3" y="191.6" width="6.9" height="1.35" fill="#84cfb8"/><rect x="1170.4" y="191.6" width="5.8" height="1.35" fill="#6ba3dc"/><rect x="1177.5" y="191.6" width="12.9" height="1.35" fill="#d4d4d4"/><rect x="1191.7" y="191.6" width="0.8" height="1.35" fill="#d4d4d4"/><rect x="1193.7" y="191.6" width="6.9" height="1.35" fill="#b5cea8"/><rect x="1201.8" y="191.6" width="4.8" height="1.35" fill="#6ba3dc"/><rect x="1206.9" y="191.6" width="0.8" height="1.35" fill="#d4d4d4"/><rect x="1209.0" y="191.6" width="1.8" height="1.35" fill="#86aa6e"/><rect x="1212.0" y="191.6" width="10.9" height="1.35" fill="#86aa6e"/><rect x="1224.2" y="191.6" width="5.8" height="1.35" fill="#86aa6e"/><rect x="1231.3" y="191.6" width="1.8" height="1.35" fill="#86aa6e"/><rect x="1234.3" y="191.6" width="8.9" height="1.35" fill="#86aa6e"/><rect x="1244.5" y="191.6" width="4.8" height="1.35" fill="#86aa6e"/><rect x="1250.6" y="191.6" width="2.8" height="1.35" fill="#86aa6e"/><rect x="1162.3" y="195.7" width="5.8" height="1.35" fill="#84cfb8"/><rect x="1169.4" y="195.7" width="5.8" height="1.35" fill="#6ba3dc"/><rect x="1176.5" y="195.7" width="8.9" height="1.35" fill="#6ba3dc"/><rect x="1186.6" y="195.7" width="5.8" height="1.35" fill="#d4d4d4"/><rect x="1193.7" y="195.7" width="1.8" height="1.35" fill="#86aa6e"/><rect x="1196.8" y="195.7" width="10.9" height="1.35" fill="#86aa6e"/><rect x="1162.3" y="197.7" width="6.9" height="1.35" fill="#84cfb8"/><rect x="1170.4" y="197.7" width="5.8" height="1.35" fill="#6ba3dc"/><rect x="1177.5" y="197.7" width="8.9" height="1.35" fill="#6ba3dc"/><rect x="1187.6" y="197.7" width="5.8" height="1.35" fill="#d4d4d4"/><rect x="1162.3" y="199.7" width="6.9" height="1.35" fill="#6ba3dc"/><rect x="1169.4" y="199.7" width="0.8" height="1.35" fill="#eacb55"/><rect x="1170.4" y="199.7" width="6.9" height="1.35" fill="#84cfb8"/><rect x="1178.5" y="199.7" width="6.9" height="1.35" fill="#a8d6f8"/><rect x="1186.6" y="199.7" width="1.8" height="1.35" fill="#d4d4d4"/><rect x="1189.7" y="199.7" width="3.8" height="1.35" fill="#84cfb8"/><rect x="1194.7" y="199.7" width="7.9" height="1.35" fill="#d4d4d4"/><rect x="1202.9" y="199.7" width="0.8" height="1.35" fill="#eacb55"/><rect x="1204.9" y="199.7" width="5.8" height="1.35" fill="#6ba3dc"/><rect x="1212.0" y="199.7" width="7.9" height="1.35" fill="#d4d4d4"/><rect x="1221.1" y="199.7" width="1.8" height="1.35" fill="#86aa6e"/><rect x="1224.2" y="199.7" width="10.9" height="1.35" fill="#86aa6e"/><rect x="1236.4" y="199.7" width="8.9" height="1.35" fill="#86aa6e"/><rect x="1246.5" y="199.7" width="1.8" height="1.35" fill="#86aa6e"/><rect x="1249.5" y="199.7" width="5.8" height="1.35" fill="#86aa6e"/><rect x="1256.7" y="199.7" width="3.8" height="1.35" fill="#86aa6e"/><rect x="1162.3" y="203.7" width="4.8" height="1.35" fill="#6ba3dc"/><rect x="1168.4" y="203.7" width="33.2" height="1.35" fill="#84cfb8"/><rect x="1201.8" y="203.7" width="1.8" height="1.35" fill="#eacb55"/><rect x="1203.9" y="203.7" width="0.8" height="1.35" fill="#d4d4d4"/><rect x="1162.3" y="205.7" width="4.8" height="1.35" fill="#6ba3dc"/><rect x="1168.4" y="205.7" width="26.1" height="1.35" fill="#84cfb8"/><rect x="1194.7" y="205.7" width="1.8" height="1.35" fill="#eacb55"/><rect x="1196.8" y="205.7" width="0.8" height="1.35" fill="#d4d4d4"/><rect x="1162.3" y="207.8" width="4.8" height="1.35" fill="#6ba3dc"/><rect x="1168.4" y="207.8" width="24.1" height="1.35" fill="#84cfb8"/><rect x="1192.7" y="207.8" width="1.8" height="1.35" fill="#eacb55"/><rect x="1194.7" y="207.8" width="0.8" height="1.35" fill="#d4d4d4"/><rect x="1162.3" y="211.8" width="4.8" height="1.35" fill="#6ba3dc"/><rect x="1168.4" y="211.8" width="6.9" height="1.35" fill="#dcdcaa"/><rect x="1175.5" y="211.8" width="0.8" height="1.35" fill="#eacb55"/><rect x="1176.5" y="211.8" width="6.9" height="1.35" fill="#84cfb8"/><rect x="1184.6" y="211.8" width="3.8" height="1.35" fill="#c794c9"/><rect x="1188.7" y="211.8" width="0.8" height="1.35" fill="#d4d4d4"/><rect x="1190.7" y="211.8" width="6.9" height="1.35" fill="#84cfb8"/><rect x="1198.8" y="211.8" width="1.8" height="1.35" fill="#a8d6f8"/><rect x="1200.8" y="211.8" width="0.8" height="1.35" fill="#d4d4d4"/><rect x="1202.9" y="211.8" width="6.9" height="1.35" fill="#84cfb8"/><rect x="1211.0" y="211.8" width="5.8" height="1.35" fill="#a8d6f8"/><rect x="1217.1" y="211.8" width="0.8" height="1.35" fill="#eacb55"/><rect x="1218.1" y="211.8" width="0.8" height="1.35" fill="#d4d4d4"/><rect x="1162.3" y="215.8" width="10.9" height="1.35" fill="#6ba3dc"/><rect x="1173.4" y="215.8" width="0.8" height="1.35" fill="#eacb55"/><rect x="1174.4" y="215.8" width="5.8" height="1.35" fill="#84cfb8"/><rect x="1181.5" y="215.8" width="5.8" height="1.35" fill="#a8d6f8"/><rect x="1187.6" y="215.8" width="0.8" height="1.35" fill="#eacb55"/><rect x="1189.7" y="215.8" width="6.9" height="1.35" fill="#84cfb8"/><rect x="1196.8" y="215.8" width="0.8" height="1.35" fill="#eacb55"/><rect x="1197.8" y="215.8" width="9.9" height="1.35" fill="#d4d4d4"/><rect x="1207.9" y="215.8" width="0.8" height="1.35" fill="#eacb55"/><rect x="1210.0" y="215.8" width="0.8" height="1.35" fill="#eacb55"/><rect x="1166.3" y="217.8" width="4.8" height="1.35" fill="#d4d4d4"/><rect x="1172.4" y="217.8" width="0.8" height="1.35" fill="#d4d4d4"/><rect x="1174.4" y="217.8" width="5.8" height="1.35" fill="#a8d6f8"/><rect x="1180.5" y="217.8" width="0.8" height="1.35" fill="#d4d4d4"/><rect x="1166.3" y="219.8" width="4.8" height="1.35" fill="#d4d4d4"/><rect x="1172.4" y="219.8" width="0.8" height="1.35" fill="#d4d4d4"/><rect x="1174.4" y="219.8" width="2.8" height="1.35" fill="#c794c9"/><rect x="1178.5" y="219.8" width="6.9" height="1.35" fill="#84cfb8"/><rect x="1185.6" y="219.8" width="0.8" height="1.35" fill="#eacb55"/><rect x="1186.6" y="219.8" width="4.8" height="1.35" fill="#d4d4d4"/><rect x="1191.7" y="219.8" width="0.8" height="1.35" fill="#eacb55"/><rect x="1192.7" y="219.8" width="0.8" height="1.35" fill="#d4d4d4"/><rect x="1166.3" y="221.9" width="1.8" height="1.35" fill="#86aa6e"/><rect x="1169.4" y="221.9" width="5.8" height="1.35" fill="#86aa6e"/><rect x="1176.5" y="221.9" width="2.8" height="1.35" fill="#86aa6e"/><rect x="1180.5" y="221.9" width="5.8" height="1.35" fill="#86aa6e"/><rect x="1187.6" y="221.9" width="1.8" height="1.35" fill="#86aa6e"/><rect x="1190.7" y="221.9" width="3.8" height="1.35" fill="#86aa6e"/><rect x="1195.8" y="221.9" width="5.8" height="1.35" fill="#86aa6e"/><rect x="1202.9" y="221.9" width="2.8" height="1.35" fill="#86aa6e"/><rect x="1206.9" y="221.9" width="1.8" height="1.35" fill="#86aa6e"/><rect x="1210.0" y="221.9" width="2.8" height="1.35" fill="#86aa6e"/><rect x="1214.0" y="221.9" width="4.8" height="1.35" fill="#86aa6e"/><rect x="1220.1" y="221.9" width="1.8" height="1.35" fill="#86aa6e"/><rect x="1223.2" y="221.9" width="9.9" height="1.35" fill="#86aa6e"/><rect x="1234.3" y="221.9" width="10.9" height="1.35" fill="#86aa6e"/><rect x="1166.3" y="223.9" width="5.8" height="1.35" fill="#d4d4d4"/><rect x="1172.4" y="223.9" width="8.9" height="1.35" fill="#dcdcaa"/><rect x="1181.5" y="223.9" width="0.8" height="1.35" fill="#eacb55"/><rect x="1182.6" y="223.9" width="6.9" height="1.35" fill="#84cfb8"/><rect x="1189.7" y="223.9" width="0.8" height="1.35" fill="#d077cf"/><rect x="1190.7" y="223.9" width="3.8" height="1.35" fill="#6ba3dc"/><rect x="1194.7" y="223.9" width="0.8" height="1.35" fill="#d077cf"/><rect x="1195.8" y="223.9" width="0.8" height="1.35" fill="#d4d4d4"/><rect x="1197.8" y="223.9" width="3.8" height="1.35" fill="#6ba3dc"/><rect x="1201.8" y="223.9" width="0.8" height="1.35" fill="#d077cf"/><rect x="1202.9" y="223.9" width="6.9" height="1.35" fill="#84cfb8"/><rect x="1210.0" y="223.9" width="0.8" height="1.35" fill="#d077cf"/><rect x="1211.0" y="223.9" width="3.8" height="1.35" fill="#d4d4d4"/><rect x="1215.0" y="223.9" width="0.8" height="1.35" fill="#eacb55"/><rect x="1216.1" y="223.9" width="0.8" height="1.35" fill="#d4d4d4"/><rect x="1162.3" y="225.9" width="0.8" height="1.35" fill="#4d9fea"/><rect x="1162.3" y="229.9" width="7.9" height="1.35" fill="#6ba3dc"/><rect x="1171.4" y="229.9" width="4.8" height="1.35" fill="#dcdcaa"/><rect x="1176.5" y="229.9" width="1.8" height="1.35" fill="#eacb55"/><rect x="1179.5" y="229.9" width="7.9" height="1.35" fill="#6ba3dc"/><rect x="1188.7" y="229.9" width="8.9" height="1.35" fill="#d4d4d4"/><rect x="1198.8" y="229.9" width="0.8" height="1.35" fill="#eacb55"/><rect x="1166.3" y="231.9" width="5.8" height="1.35" fill="#dcdcaa"/><rect x="1172.4" y="231.9" width="1.8" height="1.35" fill="#eacb55"/><rect x="1174.4" y="231.9" width="0.8" height="1.35" fill="#d4d4d4"/><rect x="1162.3" y="233.9" width="0.8" height="1.35" fill="#4d9fea"/><rect x="1162.3" y="238.0" width="7.9" height="1.35" fill="#6ba3dc"/><rect x="1171.4" y="238.0" width="6.9" height="1.35" fill="#dcdcaa"/><rect x="1178.5" y="238.0" width="1.8" height="1.35" fill="#eacb55"/><rect x="1181.5" y="238.0" width="7.9" height="1.35" fill="#6ba3dc"/><rect x="1190.7" y="238.0" width="8.9" height="1.35" fill="#d4d4d4"/><rect x="1200.8" y="238.0" width="0.8" height="1.35" fill="#eacb55"/><rect x="1166.3" y="240.0" width="7.9" height="1.35" fill="#dcdcaa"/><rect x="1174.4" y="240.0" width="1.8" height="1.35" fill="#eacb55"/><rect x="1176.5" y="240.0" width="0.8" height="1.35" fill="#d4d4d4"/><rect x="1162.3" y="242.0" width="0.8" height="1.35" fill="#4d9fea"/><rect x="1162.3" y="246.0" width="1.8" height="1.35" fill="#86aa6e"/><rect x="1165.3" y="246.0" width="10.9" height="1.35" fill="#86aa6e"/><rect x="1177.5" y="246.0" width="1.8" height="1.35" fill="#86aa6e"/><rect x="1180.5" y="246.0" width="6.9" height="1.35" fill="#86aa6e"/><rect x="1188.7" y="246.0" width="4.8" height="1.35" fill="#86aa6e"/><rect x="1162.3" y="248.1" width="7.9" height="1.35" fill="#6ba3dc"/><rect x="1171.4" y="248.1" width="8.9" height="1.35" fill="#dcdcaa"/><rect x="1180.5" y="248.1" width="0.8" height="1.35" fill="#eacb55"/><rect x="1181.5" y="248.1" width="6.9" height="1.35" fill="#84cfb8"/><rect x="1189.7" y="248.1" width="6.9" height="1.35" fill="#a8d6f8"/><rect x="1196.8" y="248.1" width="0.8" height="1.35" fill="#d4d4d4"/><rect x="1198.8" y="248.1" width="3.8" height="1.35" fill="#84cfb8"/><rect x="1203.9" y="248.1" width="6.9" height="1.35" fill="#a8d6f8"/><rect x="1211.0" y="248.1" width="0.8" height="1.35" fill="#eacb55"/><rect x="1213.0" y="248.1" width="7.9" height="1.35" fill="#6ba3dc"/><rect x="1222.1" y="248.1" width="8.9" height="1.35" fill="#d4d4d4"/><rect x="1232.3" y="248.1" width="0.8" height="1.35" fill="#eacb55"/><rect x="1166.3" y="250.1" width="6.9" height="1.35" fill="#d4d4d4"/><rect x="1173.4" y="250.1" width="0.8" height="1.35" fill="#eacb55"/><rect x="1174.4" y="250.1" width="6.9" height="1.35" fill="#a8d6f8"/><rect x="1181.5" y="250.1" width="0.8" height="1.35" fill="#eacb55"/><rect x="1183.6" y="250.1" width="0.8" height="1.35" fill="#d4d4d4"/><rect x="1185.6" y="250.1" width="6.9" height="1.35" fill="#a8d6f8"/><rect x="1192.7" y="250.1" width="0.8" height="1.35" fill="#d4d4d4"/><rect x="1162.3" y="252.1" width="0.8" height="1.35" fill="#4d9fea"/><rect x="1162.3" y="256.1" width="1.8" height="1.35" fill="#86aa6e"/><rect x="1163.3" y="258.1" width="0.8" height="1.35" fill="#86aa6e"/><rect x="1165.3" y="258.1" width="6.9" height="1.35" fill="#86aa6e"/><rect x="1173.4" y="258.1" width="4.8" height="1.35" fill="#86aa6e"/><rect x="1179.5" y="258.1" width="5.8" height="1.35" fill="#86aa6e"/><rect x="1186.6" y="258.1" width="1.8" height="1.35" fill="#86aa6e"/><rect x="1189.7" y="258.1" width="2.8" height="1.35" fill="#86aa6e"/><rect x="1193.7" y="258.1" width="4.8" height="1.35" fill="#86aa6e"/><rect x="1199.8" y="258.1" width="2.8" height="1.35" fill="#86aa6e"/><rect x="1203.9" y="258.1" width="4.8" height="1.35" fill="#86aa6e"/><rect x="1210.0" y="258.1" width="0.8" height="1.35" fill="#86aa6e"/><rect x="1212.0" y="258.1" width="6.9" height="1.35" fill="#86aa6e"/><rect x="1220.1" y="258.1" width="4.8" height="1.35" fill="#86aa6e"/><rect x="1163.3" y="260.1" width="0.8" height="1.35" fill="#86aa6e"/><rect x="1165.3" y="260.1" width="2.8" height="1.35" fill="#86aa6e"/><rect x="1169.4" y="260.1" width="5.8" height="1.35" fill="#86aa6e"/><rect x="1176.5" y="260.1" width="4.8" height="1.35" fill="#86aa6e"/><rect x="1182.6" y="260.1" width="3.8" height="1.35" fill="#86aa6e"/><rect x="1187.6" y="260.1" width="6.9" height="1.35" fill="#86aa6e"/><rect x="1195.8" y="260.1" width="2.8" height="1.35" fill="#86aa6e"/><rect x="1199.8" y="260.1" width="1.8" height="1.35" fill="#86aa6e"/><rect x="1202.9" y="260.1" width="6.9" height="1.35" fill="#86aa6e"/><rect x="1211.0" y="260.1" width="7.9" height="1.35" fill="#86aa6e"/><rect x="1220.1" y="260.1" width="4.8" height="1.35" fill="#86aa6e"/><rect x="1226.2" y="260.1" width="2.8" height="1.35" fill="#86aa6e"/><rect x="1230.3" y="260.1" width="4.8" height="1.35" fill="#86aa6e"/><rect x="1236.4" y="260.1" width="8.9" height="1.35" fill="#86aa6e"/><rect x="1163.3" y="262.2" width="0.8" height="1.35" fill="#86aa6e"/><rect x="1165.3" y="262.2" width="2.8" height="1.35" fill="#86aa6e"/><rect x="1169.4" y="262.2" width="3.8" height="1.35" fill="#86aa6e"/><rect x="1174.4" y="262.2" width="4.8" height="1.35" fill="#86aa6e"/><rect x="1180.5" y="262.2" width="2.8" height="1.35" fill="#86aa6e"/><rect x="1184.6" y="262.2" width="3.8" height="1.35" fill="#86aa6e"/><rect x="1189.7" y="262.2" width="3.8" height="1.35" fill="#86aa6e"/><rect x="1194.7" y="262.2" width="2.8" height="1.35" fill="#86aa6e"/><rect x="1198.8" y="262.2" width="12.9" height="1.35" fill="#86aa6e"/><rect x="1213.0" y="262.2" width="5.8" height="1.35" fill="#86aa6e"/><rect x="1220.1" y="262.2" width="1.8" height="1.35" fill="#86aa6e"/><rect x="1223.2" y="262.2" width="2.8" height="1.35" fill="#86aa6e"/><rect x="1227.2" y="262.2" width="3.8" height="1.35" fill="#86aa6e"/><rect x="1232.3" y="262.2" width="1.8" height="1.35" fill="#86aa6e"/><rect x="1235.3" y="262.2" width="0.8" height="1.35" fill="#86aa6e"/><rect x="1237.4" y="262.2" width="10.9" height="1.35" fill="#86aa6e"/><rect x="1249.5" y="262.2" width="7.9" height="1.35" fill="#86aa6e"/><rect x="1163.3" y="264.2" width="0.8" height="1.35" fill="#86aa6e"/><rect x="1163.3" y="266.2" width="0.8" height="1.35" fill="#86aa6e"/><rect x="1165.3" y="266.2" width="10.9" height="1.35" fill="#86aa6e"/><rect x="1177.5" y="266.2" width="2.8" height="1.35" fill="#86aa6e"/><rect x="1181.5" y="266.2" width="3.8" height="1.35" fill="#86aa6e"/><rect x="1186.6" y="266.2" width="4.8" height="1.35" fill="#86aa6e"/><rect x="1192.7" y="266.2" width="1.8" height="1.35" fill="#86aa6e"/><rect x="1195.8" y="266.2" width="2.8" height="1.35" fill="#86aa6e"/><rect x="1199.8" y="266.2" width="8.9" height="1.35" fill="#86aa6e"/><rect x="1163.3" y="268.2" width="0.8" height="1.35" fill="#86aa6e"/><rect x="1165.3" y="268.2" width="5.8" height="1.35" fill="#86aa6e"/><rect x="1172.4" y="268.2" width="3.8" height="1.35" fill="#86aa6e"/><rect x="1177.5" y="268.2" width="2.8" height="1.35" fill="#86aa6e"/><rect x="1181.5" y="268.2" width="6.9" height="1.35" fill="#86aa6e"/><rect x="1189.7" y="268.2" width="1.8" height="1.35" fill="#86aa6e"/><rect x="1192.7" y="268.2" width="2.8" height="1.35" fill="#86aa6e"/><rect x="1196.8" y="268.2" width="3.8" height="1.35" fill="#86aa6e"/><rect x="1201.8" y="268.2" width="2.8" height="1.35" fill="#86aa6e"/><rect x="1205.9" y="268.2" width="1.8" height="1.35" fill="#86aa6e"/><rect x="1209.0" y="268.2" width="9.9" height="1.35" fill="#86aa6e"/><rect x="1220.1" y="268.2" width="5.8" height="1.35" fill="#86aa6e"/><rect x="1163.3" y="270.2" width="0.8" height="1.35" fill="#86aa6e"/><rect x="1165.3" y="270.2" width="5.8" height="1.35" fill="#86aa6e"/><rect x="1172.4" y="270.2" width="10.9" height="1.35" fill="#86aa6e"/><rect x="1184.6" y="270.2" width="2.8" height="1.35" fill="#86aa6e"/><rect x="1188.7" y="270.2" width="6.9" height="1.35" fill="#86aa6e"/><rect x="1196.8" y="270.2" width="1.8" height="1.35" fill="#86aa6e"/><rect x="1199.8" y="270.2" width="2.8" height="1.35" fill="#86aa6e"/><rect x="1203.9" y="270.2" width="3.8" height="1.35" fill="#86aa6e"/><rect x="1209.0" y="270.2" width="2.8" height="1.35" fill="#86aa6e"/><rect x="1213.0" y="270.2" width="3.8" height="1.35" fill="#86aa6e"/><rect x="1218.1" y="270.2" width="6.9" height="1.35" fill="#86aa6e"/><rect x="1226.2" y="270.2" width="2.8" height="1.35" fill="#86aa6e"/><rect x="1230.3" y="270.2" width="5.8" height="1.35" fill="#86aa6e"/><rect x="1237.4" y="270.2" width="1.8" height="1.35" fill="#86aa6e"/><rect x="1240.4" y="270.2" width="1.8" height="1.35" fill="#86aa6e"/><rect x="1163.3" y="272.2" width="0.8" height="1.35" fill="#86aa6e"/><rect x="1165.3" y="272.2" width="5.8" height="1.35" fill="#86aa6e"/><rect x="1172.4" y="272.2" width="5.8" height="1.35" fill="#86aa6e"/><rect x="1179.5" y="272.2" width="2.8" height="1.35" fill="#86aa6e"/><rect x="1183.6" y="272.2" width="5.8" height="1.35" fill="#86aa6e"/><rect x="1190.7" y="272.2" width="1.8" height="1.35" fill="#86aa6e"/><rect x="1193.7" y="272.2" width="5.8" height="1.35" fill="#86aa6e"/><rect x="1200.8" y="272.2" width="1.8" height="1.35" fill="#86aa6e"/><rect x="1203.9" y="272.2" width="6.9" height="1.35" fill="#86aa6e"/><rect x="1163.3" y="274.2" width="1.8" height="1.35" fill="#86aa6e"/><rect x="1162.3" y="276.3" width="1.8" height="1.35" fill="#86aa6e"/><rect x="1165.3" y="276.3" width="10.9" height="1.35" fill="#86aa6e"/><rect x="1177.5" y="276.3" width="1.8" height="1.35" fill="#86aa6e"/><rect x="1180.5" y="276.3" width="0.8" height="1.35" fill="#86aa6e"/><rect x="1182.6" y="276.3" width="3.8" height="1.35" fill="#86aa6e"/><rect x="1187.6" y="276.3" width="7.9" height="1.35" fill="#86aa6e"/><rect x="1196.8" y="276.3" width="2.8" height="1.35" fill="#86aa6e"/><rect x="1200.8" y="276.3" width="6.9" height="1.35" fill="#86aa6e"/><rect x="1209.0" y="276.3" width="2.8" height="1.35" fill="#86aa6e"/><rect x="1213.0" y="276.3" width="3.8" height="1.35" fill="#86aa6e"/><rect x="1218.1" y="276.3" width="2.8" height="1.35" fill="#86aa6e"/><rect x="1222.1" y="276.3" width="4.8" height="1.35" fill="#86aa6e"/><rect x="1228.2" y="276.3" width="4.8" height="1.35" fill="#86aa6e"/><rect x="1234.3" y="276.3" width="4.8" height="1.35" fill="#86aa6e"/><rect x="1162.3" y="278.3" width="1.8" height="1.35" fill="#86aa6e"/><rect x="1165.3" y="278.3" width="10.9" height="1.35" fill="#86aa6e"/><rect x="1177.5" y="278.3" width="1.8" height="1.35" fill="#86aa6e"/><rect x="1180.5" y="278.3" width="2.8" height="1.35" fill="#86aa6e"/><rect x="1184.6" y="278.3" width="4.8" height="1.35" fill="#86aa6e"/><rect x="1190.7" y="278.3" width="7.9" height="1.35" fill="#86aa6e"/><rect x="1199.8" y="278.3" width="2.8" height="1.35" fill="#86aa6e"/><rect x="1203.9" y="278.3" width="6.9" height="1.35" fill="#86aa6e"/><rect x="1212.0" y="278.3" width="2.8" height="1.35" fill="#86aa6e"/><rect x="1216.1" y="278.3" width="0.8" height="1.35" fill="#86aa6e"/><rect x="1218.1" y="278.3" width="3.8" height="1.35" fill="#86aa6e"/><rect x="1223.2" y="278.3" width="4.8" height="1.35" fill="#86aa6e"/><rect x="1229.2" y="278.3" width="4.8" height="1.35" fill="#86aa6e"/><rect x="1235.3" y="278.3" width="3.8" height="1.35" fill="#86aa6e"/><rect x="1240.4" y="278.3" width="2.8" height="1.35" fill="#86aa6e"/><rect x="1244.5" y="278.3" width="5.8" height="1.35" fill="#86aa6e"/><rect x="1162.3" y="280.3" width="1.8" height="1.35" fill="#86aa6e"/><rect x="1165.3" y="280.3" width="12.9" height="1.35" fill="#86aa6e"/><rect x="1179.5" y="280.3" width="6.9" height="1.35" fill="#86aa6e"/><rect x="1187.6" y="280.3" width="4.8" height="1.35" fill="#86aa6e"/><rect x="1193.7" y="280.3" width="2.8" height="1.35" fill="#86aa6e"/><rect x="1197.8" y="280.3" width="1.8" height="1.35" fill="#86aa6e"/><rect x="1200.8" y="280.3" width="6.9" height="1.35" fill="#86aa6e"/><rect x="1209.0" y="280.3" width="1.8" height="1.35" fill="#86aa6e"/><rect x="1212.0" y="280.3" width="0.8" height="1.35" fill="#86aa6e"/><rect x="1214.0" y="280.3" width="8.9" height="1.35" fill="#86aa6e"/><rect x="1224.2" y="280.3" width="4.8" height="1.35" fill="#86aa6e"/><rect x="1230.3" y="280.3" width="4.8" height="1.35" fill="#86aa6e"/><rect x="1236.4" y="280.3" width="6.9" height="1.35" fill="#86aa6e"/><rect x="1162.3" y="282.3" width="7.9" height="1.35" fill="#6ba3dc"/><rect x="1171.4" y="282.3" width="17.0" height="1.35" fill="#dcdcaa"/><rect x="1188.7" y="282.3" width="0.8" height="1.35" fill="#eacb55"/><rect x="1189.7" y="282.3" width="6.9" height="1.35" fill="#84cfb8"/><rect x="1197.8" y="282.3" width="3.8" height="1.35" fill="#c794c9"/><rect x="1201.8" y="282.3" width="0.8" height="1.35" fill="#d4d4d4"/><rect x="1203.9" y="282.3" width="6.9" height="1.35" fill="#84cfb8"/><rect x="1212.0" y="282.3" width="10.9" height="1.35" fill="#a8d6f8"/><rect x="1223.2" y="282.3" width="0.8" height="1.35" fill="#d4d4d4"/><rect x="1225.2" y="282.3" width="6.9" height="1.35" fill="#84cfb8"/><rect x="1233.3" y="282.3" width="5.8" height="1.35" fill="#a8d6f8"/><rect x="1239.4" y="282.3" width="0.8" height="1.35" fill="#eacb55"/><rect x="1241.4" y="282.3" width="7.9" height="1.35" fill="#6ba3dc"/><rect x="1250.6" y="282.3" width="9.9" height="1.35" fill="#d4d4d4"/><rect x="1166.3" y="284.3" width="1.8" height="1.35" fill="#c794c9"/><rect x="1169.4" y="284.3" width="0.8" height="1.35" fill="#eacb55"/><rect x="1170.4" y="284.3" width="5.8" height="1.35" fill="#d4d4d4"/><rect x="1176.5" y="284.3" width="8.9" height="1.35" fill="#dcdcaa"/><rect x="1185.6" y="284.3" width="0.8" height="1.35" fill="#d077cf"/><rect x="1186.6" y="284.3" width="6.9" height="1.35" fill="#84cfb8"/><rect x="1193.7" y="284.3" width="0.8" height="1.35" fill="#4d9fea"/><rect x="1194.7" y="284.3" width="4.8" height="1.35" fill="#d4d4d4"/><rect x="1199.8" y="284.3" width="0.8" height="1.35" fill="#4d9fea"/><rect x="1200.8" y="284.3" width="0.8" height="1.35" fill="#d077cf"/><rect x="1202.9" y="284.3" width="0.8" height="1.35" fill="#d4d4d4"/><rect x="1204.9" y="284.3" width="5.8" height="1.35" fill="#a8d6f8"/><rect x="1212.0" y="284.3" width="0.8" height="1.35" fill="#d4d4d4"/><rect x="1214.0" y="284.3" width="12.9" height="1.35" fill="#d4d4d4"/><rect x="1227.2" y="284.3" width="0.8" height="1.35" fill="#eacb55"/><rect x="1229.2" y="284.3" width="0.8" height="1.35" fill="#eacb55"/><rect x="1170.4" y="286.3" width="5.8" height="1.35" fill="#c794c9"/><rect x="1177.5" y="286.3" width="33.2" height="1.35" fill="#84cfb8"/><rect x="1211.0" y="286.3" width="1.8" height="1.35" fill="#eacb55"/><rect x="1213.0" y="286.3" width="0.8" height="1.35" fill="#d4d4d4"/><rect x="1166.3" y="288.4" width="0.8" height="1.35" fill="#4d9fea"/><rect x="1166.3" y="290.4" width="5.8" height="1.35" fill="#d4d4d4"/><rect x="1172.4" y="290.4" width="16.0" height="1.35" fill="#dcdcaa"/><rect x="1188.7" y="290.4" width="0.8" height="1.35" fill="#eacb55"/><rect x="1189.7" y="290.4" width="3.8" height="1.35" fill="#c794c9"/><rect x="1193.7" y="290.4" width="0.8" height="1.35" fill="#d4d4d4"/><rect x="1195.8" y="290.4" width="6.9" height="1.35" fill="#84cfb8"/><rect x="1202.9" y="290.4" width="0.8" height="1.35" fill="#d077cf"/><rect x="1203.9" y="290.4" width="4.8" height="1.35" fill="#d4d4d4"/><rect x="1209.0" y="290.4" width="0.8" height="1.35" fill="#d077cf"/><rect x="1210.0" y="290.4" width="0.8" height="1.35" fill="#d4d4d4"/><rect x="1212.0" y="290.4" width="5.8" height="1.35" fill="#a8d6f8"/><rect x="1218.1" y="290.4" width="0.8" height="1.35" fill="#eacb55"/><rect x="1219.1" y="290.4" width="0.8" height="1.35" fill="#d4d4d4"/><rect x="1166.3" y="294.4" width="1.8" height="1.35" fill="#86aa6e"/><rect x="1169.4" y="294.4" width="2.8" height="1.35" fill="#86aa6e"/><rect x="1173.4" y="294.4" width="8.9" height="1.35" fill="#86aa6e"/><rect x="1183.6" y="294.4" width="6.9" height="1.35" fill="#86aa6e"/><rect x="1191.7" y="294.4" width="4.8" height="1.35" fill="#86aa6e"/><rect x="1197.8" y="294.4" width="1.8" height="1.35" fill="#86aa6e"/><rect x="1200.8" y="294.4" width="3.8" height="1.35" fill="#86aa6e"/><rect x="1205.9" y="294.4" width="4.8" height="1.35" fill="#86aa6e"/><rect x="1212.0" y="294.4" width="2.8" height="1.35" fill="#86aa6e"/><rect x="1216.1" y="294.4" width="4.8" height="1.35" fill="#86aa6e"/><rect x="1222.1" y="294.4" width="2.8" height="1.35" fill="#86aa6e"/><rect x="1226.2" y="294.4" width="12.9" height="1.35" fill="#86aa6e"/><rect x="1240.4" y="294.4" width="5.8" height="1.35" fill="#86aa6e"/><rect x="1247.5" y="294.4" width="1.8" height="1.35" fill="#86aa6e"/><rect x="1250.6" y="294.4" width="1.8" height="1.35" fill="#86aa6e"/><rect x="1166.3" y="296.4" width="1.8" height="1.35" fill="#86aa6e"/><rect x="1169.4" y="296.4" width="10.9" height="1.35" fill="#86aa6e"/><rect x="1181.5" y="296.4" width="5.8" height="1.35" fill="#86aa6e"/><rect x="1188.7" y="296.4" width="5.8" height="1.35" fill="#86aa6e"/><rect x="1195.8" y="296.4" width="2.8" height="1.35" fill="#86aa6e"/><rect x="1166.3" y="298.4" width="3.8" height="1.35" fill="#c794c9"/><rect x="1171.4" y="298.4" width="6.9" height="1.35" fill="#dcdcaa"/><rect x="1178.5" y="298.4" width="0.8" height="1.35" fill="#eacb55"/><rect x="1179.5" y="298.4" width="3.8" height="1.35" fill="#c794c9"/><rect x="1183.6" y="298.4" width="0.8" height="1.35" fill="#d4d4d4"/><rect x="1185.6" y="298.4" width="10.9" height="1.35" fill="#a8d6f8"/><rect x="1196.8" y="298.4" width="0.8" height="1.35" fill="#d4d4d4"/><rect x="1198.8" y="298.4" width="5.8" height="1.35" fill="#a8d6f8"/><rect x="1204.9" y="298.4" width="0.8" height="1.35" fill="#eacb55"/><rect x="1205.9" y="298.4" width="0.8" height="1.35" fill="#d4d4d4"/><rect x="1162.3" y="300.4" width="0.8" height="1.35" fill="#4d9fea"/><rect x="1162.3" y="304.5" width="1.8" height="1.35" fill="#86aa6e"/><rect x="1163.3" y="306.5" width="0.8" height="1.35" fill="#86aa6e"/><rect x="1165.3" y="306.5" width="6.9" height="1.35" fill="#86aa6e"/><rect x="1173.4" y="306.5" width="3.8" height="1.35" fill="#86aa6e"/><rect x="1178.5" y="306.5" width="1.8" height="1.35" fill="#86aa6e"/><rect x="1181.5" y="306.5" width="2.8" height="1.35" fill="#86aa6e"/><rect x="1185.6" y="306.5" width="7.9" height="1.35" fill="#86aa6e"/><rect x="1194.7" y="306.5" width="10.9" height="1.35" fill="#86aa6e"/><rect x="1206.9" y="306.5" width="2.8" height="1.35" fill="#86aa6e"/><rect x="1211.0" y="306.5" width="10.9" height="1.35" fill="#86aa6e"/><rect x="1223.2" y="306.5" width="5.8" height="1.35" fill="#86aa6e"/><rect x="1230.3" y="306.5" width="3.8" height="1.35" fill="#86aa6e"/><rect x="1235.3" y="306.5" width="1.8" height="1.35" fill="#86aa6e"/><rect x="1238.4" y="306.5" width="1.8" height="1.35" fill="#86aa6e"/><rect x="1241.4" y="306.5" width="2.8" height="1.35" fill="#86aa6e"/><rect x="1163.3" y="308.5" width="0.8" height="1.35" fill="#86aa6e"/><rect x="1165.3" y="308.5" width="2.8" height="1.35" fill="#86aa6e"/><rect x="1169.4" y="308.5" width="1.8" height="1.35" fill="#86aa6e"/><rect x="1172.4" y="308.5" width="3.8" height="1.35" fill="#86aa6e"/><rect x="1177.5" y="308.5" width="3.8" height="1.35" fill="#86aa6e"/><rect x="1182.6" y="308.5" width="0.8" height="1.35" fill="#86aa6e"/><rect x="1184.6" y="308.5" width="6.9" height="1.35" fill="#86aa6e"/><rect x="1192.7" y="308.5" width="8.9" height="1.35" fill="#86aa6e"/><rect x="1202.9" y="308.5" width="2.8" height="1.35" fill="#86aa6e"/><rect x="1206.9" y="308.5" width="10.9" height="1.35" fill="#86aa6e"/><rect x="1219.1" y="308.5" width="5.8" height="1.35" fill="#86aa6e"/><rect x="1226.2" y="308.5" width="3.8" height="1.35" fill="#86aa6e"/><rect x="1231.3" y="308.5" width="1.8" height="1.35" fill="#86aa6e"/><rect x="1234.3" y="308.5" width="1.8" height="1.35" fill="#86aa6e"/><rect x="1237.4" y="308.5" width="2.8" height="1.35" fill="#86aa6e"/><rect x="1163.3" y="310.5" width="0.8" height="1.35" fill="#86aa6e"/><rect x="1163.3" y="312.5" width="0.8" height="1.35" fill="#86aa6e"/><rect x="1165.3" y="312.5" width="5.8" height="1.35" fill="#86aa6e"/><rect x="1172.4" y="312.5" width="1.8" height="1.35" fill="#86aa6e"/><rect x="1175.5" y="312.5" width="2.8" height="1.35" fill="#86aa6e"/><rect x="1179.5" y="312.5" width="6.9" height="1.35" fill="#86aa6e"/><rect x="1187.6" y="312.5" width="1.8" height="1.35" fill="#86aa6e"/><rect x="1190.7" y="312.5" width="2.8" height="1.35" fill="#86aa6e"/><rect x="1194.7" y="312.5" width="3.8" height="1.35" fill="#86aa6e"/><rect x="1199.8" y="312.5" width="2.8" height="1.35" fill="#86aa6e"/><rect x="1203.9" y="312.5" width="3.8" height="1.35" fill="#86aa6e"/><rect x="1209.0" y="312.5" width="6.9" height="1.35" fill="#86aa6e"/><rect x="1217.1" y="312.5" width="2.8" height="1.35" fill="#86aa6e"/><rect x="1221.1" y="312.5" width="5.8" height="1.35" fill="#86aa6e"/><rect x="1228.2" y="312.5" width="1.8" height="1.35" fill="#86aa6e"/><rect x="1231.3" y="312.5" width="1.8" height="1.35" fill="#86aa6e"/><rect x="1163.3" y="314.6" width="0.8" height="1.35" fill="#86aa6e"/><rect x="1165.3" y="314.6" width="5.8" height="1.35" fill="#86aa6e"/><rect x="1172.4" y="314.6" width="5.8" height="1.35" fill="#86aa6e"/><rect x="1179.5" y="314.6" width="2.8" height="1.35" fill="#86aa6e"/><rect x="1183.6" y="314.6" width="5.8" height="1.35" fill="#86aa6e"/><rect x="1190.7" y="314.6" width="1.8" height="1.35" fill="#86aa6e"/><rect x="1193.7" y="314.6" width="5.8" height="1.35" fill="#86aa6e"/><rect x="1200.8" y="314.6" width="1.8" height="1.35" fill="#86aa6e"/><rect x="1203.9" y="314.6" width="7.9" height="1.35" fill="#86aa6e"/><rect x="1163.3" y="316.6" width="0.8" height="1.35" fill="#86aa6e"/><rect x="1165.3" y="316.6" width="5.8" height="1.35" fill="#86aa6e"/><rect x="1172.4" y="316.6" width="0.8" height="1.35" fill="#86aa6e"/><rect x="1174.4" y="316.6" width="2.8" height="1.35" fill="#86aa6e"/><rect x="1178.5" y="316.6" width="0.8" height="1.35" fill="#86aa6e"/><rect x="1180.5" y="316.6" width="4.8" height="1.35" fill="#86aa6e"/><rect x="1186.6" y="316.6" width="1.8" height="1.35" fill="#86aa6e"/><rect x="1189.7" y="316.6" width="2.8" height="1.35" fill="#86aa6e"/><rect x="1193.7" y="316.6" width="8.9" height="1.35" fill="#86aa6e"/><rect x="1163.3" y="318.6" width="0.8" height="1.35" fill="#86aa6e"/><rect x="1165.3" y="318.6" width="5.8" height="1.35" fill="#86aa6e"/><rect x="1172.4" y="318.6" width="0.8" height="1.35" fill="#86aa6e"/><rect x="1174.4" y="318.6" width="2.8" height="1.35" fill="#86aa6e"/><rect x="1178.5" y="318.6" width="0.8" height="1.35" fill="#86aa6e"/><rect x="1180.5" y="318.6" width="4.8" height="1.35" fill="#86aa6e"/><rect x="1186.6" y="318.6" width="1.8" height="1.35" fill="#86aa6e"/><rect x="1189.7" y="318.6" width="2.8" height="1.35" fill="#86aa6e"/><rect x="1193.7" y="318.6" width="8.9" height="1.35" fill="#86aa6e"/><rect x="1163.3" y="320.6" width="0.8" height="1.35" fill="#86aa6e"/><rect x="1165.3" y="320.6" width="5.8" height="1.35" fill="#86aa6e"/><rect x="1172.4" y="320.6" width="0.8" height="1.35" fill="#86aa6e"/><rect x="1174.4" y="320.6" width="2.8" height="1.35" fill="#86aa6e"/><rect x="1178.5" y="320.6" width="0.8" height="1.35" fill="#86aa6e"/><rect x="1180.5" y="320.6" width="4.8" height="1.35" fill="#86aa6e"/><rect x="1186.6" y="320.6" width="1.8" height="1.35" fill="#86aa6e"/><rect x="1189.7" y="320.6" width="2.8" height="1.35" fill="#86aa6e"/><rect x="1193.7" y="320.6" width="8.9" height="1.35" fill="#86aa6e"/><rect x="1163.3" y="322.6" width="1.8" height="1.35" fill="#86aa6e"/><rect x="1162.3" y="324.6" width="7.9" height="1.35" fill="#6ba3dc"/><rect x="1171.4" y="324.6" width="18.0" height="1.35" fill="#dcdcaa"/><rect x="1189.7" y="324.6" width="0.8" height="1.35" fill="#eacb55"/><rect x="1190.7" y="324.6" width="6.9" height="1.35" fill="#84cfb8"/><rect x="1198.8" y="324.6" width="1.8" height="1.35" fill="#a8d6f8"/><rect x="1200.8" y="324.6" width="0.8" height="1.35" fill="#d4d4d4"/><rect x="1202.9" y="324.6" width="6.9" height="1.35" fill="#84cfb8"/><rect x="1211.0" y="324.6" width="5.8" height="1.35" fill="#a8d6f8"/><rect x="1217.1" y="324.6" width="0.8" height="1.35" fill="#d4d4d4"/><rect x="1219.1" y="324.6" width="4.8" height="1.35" fill="#84cfb8"/><rect x="1225.2" y="324.6" width="0.8" height="1.35" fill="#a8d6f8"/><rect x="1226.2" y="324.6" width="0.8" height="1.35" fill="#d4d4d4"/><rect x="1228.2" y="324.6" width="6.9" height="1.35" fill="#84cfb8"/><rect x="1236.4" y="324.6" width="0.8" height="1.35" fill="#a8d6f8"/><rect x="1237.4" y="324.6" width="0.8" height="1.35" fill="#d4d4d4"/><rect x="1239.4" y="324.6" width="6.9" height="1.35" fill="#84cfb8"/><rect x="1247.5" y="324.6" width="0.8" height="1.35" fill="#a8d6f8"/><rect x="1248.5" y="324.6" width="0.8" height="1.35" fill="#eacb55"/><rect x="1250.6" y="324.6" width="7.9" height="1.35" fill="#6ba3dc"/><rect x="1259.7" y="324.6" width="0.8" height="1.35" fill="#eacb55"/><rect x="1166.3" y="326.6" width="7.9" height="1.35" fill="#dcdcaa"/><rect x="1174.4" y="326.6" width="0.8" height="1.35" fill="#eacb55"/><rect x="1170.4" y="328.7" width="0.8" height="1.35" fill="#a8d6f8"/><rect x="1171.4" y="328.7" width="0.8" height="1.35" fill="#d4d4d4"/><rect x="1170.4" y="330.7" width="0.8" height="1.35" fill="#a8d6f8"/><rect x="1171.4" y="330.7" width="0.8" height="1.35" fill="#d4d4d4"/><rect x="1170.4" y="332.7" width="0.8" height="1.35" fill="#a8d6f8"/><rect x="1171.4" y="332.7" width="0.8" height="1.35" fill="#d4d4d4"/><rect x="1170.4" y="334.7" width="2.8" height="1.35" fill="#6ba3dc"/><rect x="1173.4" y="334.7" width="0.8" height="1.35" fill="#d4d4d4"/><rect x="1174.4" y="334.7" width="5.8" height="1.35" fill="#dcdcaa"/><rect x="1180.5" y="334.7" width="0.8" height="1.35" fill="#eacb55"/><rect x="1174.4" y="336.7" width="6.9" height="1.35" fill="#84cfb8"/><rect x="1181.5" y="336.7" width="0.8" height="1.35" fill="#eacb55"/><rect x="1182.6" y="336.7" width="4.8" height="1.35" fill="#d4d4d4"/><rect x="1187.6" y="336.7" width="0.8" height="1.35" fill="#eacb55"/><rect x="1188.7" y="336.7" width="0.8" height="1.35" fill="#d4d4d4"/><rect x="1174.4" y="338.7" width="0.8" height="1.35" fill="#b5cea8"/><rect x="1175.5" y="338.7" width="0.8" height="1.35" fill="#d4d4d4"/><rect x="1177.5" y="338.7" width="1.8" height="1.35" fill="#86aa6e"/><rect x="1180.5" y="338.7" width="4.8" height="1.35" fill="#86aa6e"/><rect x="1174.4" y="340.7" width="2.8" height="1.35" fill="#6ba3dc"/><rect x="1177.5" y="340.7" width="0.8" height="1.35" fill="#d4d4d4"/><rect x="1178.5" y="340.7" width="9.9" height="1.35" fill="#dcdcaa"/><rect x="1188.7" y="340.7" width="0.8" height="1.35" fill="#eacb55"/><rect x="1189.7" y="340.7" width="5.8" height="1.35" fill="#84cfb8"/><rect x="1195.8" y="340.7" width="14.0" height="1.35" fill="#d4d4d4"/><rect x="1211.0" y="340.7" width="0.8" height="1.35" fill="#d077cf"/><rect x="1212.0" y="340.7" width="6.9" height="1.35" fill="#84cfb8"/><rect x="1219.1" y="340.7" width="0.8" height="1.35" fill="#4d9fea"/><rect x="1220.1" y="340.7" width="4.8" height="1.35" fill="#d4d4d4"/><rect x="1225.2" y="340.7" width="0.8" height="1.35" fill="#4d9fea"/><rect x="1226.2" y="340.7" width="0.8" height="1.35" fill="#d4d4d4"/><rect x="1228.2" y="340.7" width="1.8" height="1.35" fill="#a8d6f8"/><rect x="1230.3" y="340.7" width="0.8" height="1.35" fill="#d4d4d4"/><rect x="1232.3" y="340.7" width="5.8" height="1.35" fill="#a8d6f8"/><rect x="1238.4" y="340.7" width="0.8" height="1.35" fill="#d077cf"/><rect x="1239.4" y="340.7" width="0.8" height="1.35" fill="#eacb55"/><rect x="1170.4" y="342.8" width="0.8" height="1.35" fill="#4d9fea"/><rect x="1166.3" y="344.8" width="0.8" height="1.35" fill="#4d9fea"/><rect x="1167.3" y="344.8" width="0.8" height="1.35" fill="#d4d4d4"/><rect x="1162.3" y="346.8" width="0.8" height="1.35" fill="#4d9fea"/><rect x="1162.3" y="350.8" width="1.8" height="1.35" fill="#86aa6e"/><rect x="1163.3" y="352.8" width="0.8" height="1.35" fill="#86aa6e"/><rect x="1165.3" y="352.8" width="6.9" height="1.35" fill="#86aa6e"/><rect x="1173.4" y="352.8" width="3.8" height="1.35" fill="#86aa6e"/><rect x="1178.5" y="352.8" width="1.8" height="1.35" fill="#86aa6e"/><rect x="1181.5" y="352.8" width="2.8" height="1.35" fill="#86aa6e"/><rect x="1185.6" y="352.8" width="7.9" height="1.35" fill="#86aa6e"/><rect x="1194.7" y="352.8" width="10.9" height="1.35" fill="#86aa6e"/><rect x="1206.9" y="352.8" width="2.8" height="1.35" fill="#86aa6e"/><rect x="1211.0" y="352.8" width="10.9" height="1.35" fill="#86aa6e"/><rect x="1223.2" y="352.8" width="2.8" height="1.35" fill="#86aa6e"/><rect x="1227.2" y="352.8" width="3.8" height="1.35" fill="#86aa6e"/><rect x="1232.3" y="352.8" width="1.8" height="1.35" fill="#86aa6e"/><rect x="1235.3" y="352.8" width="1.8" height="1.35" fill="#86aa6e"/><rect x="1238.4" y="352.8" width="2.8" height="1.35" fill="#86aa6e"/><rect x="1163.3" y="354.9" width="0.8" height="1.35" fill="#86aa6e"/><rect x="1163.3" y="356.9" width="0.8" height="1.35" fill="#86aa6e"/><rect x="1165.3" y="356.9" width="5.8" height="1.35" fill="#86aa6e"/><rect x="1172.4" y="356.9" width="0.8" height="1.35" fill="#86aa6e"/><rect x="1174.4" y="356.9" width="2.8" height="1.35" fill="#86aa6e"/><rect x="1178.5" y="356.9" width="0.8" height="1.35" fill="#86aa6e"/><rect x="1180.5" y="356.9" width="4.8" height="1.35" fill="#86aa6e"/><rect x="1186.6" y="356.9" width="1.8" height="1.35" fill="#86aa6e"/><rect x="1189.7" y="356.9" width="2.8" height="1.35" fill="#86aa6e"/><rect x="1193.7" y="356.9" width="8.9" height="1.35" fill="#86aa6e"/><rect x="1163.3" y="358.9" width="0.8" height="1.35" fill="#86aa6e"/><rect x="1165.3" y="358.9" width="5.8" height="1.35" fill="#86aa6e"/><rect x="1172.4" y="358.9" width="0.8" height="1.35" fill="#86aa6e"/><rect x="1174.4" y="358.9" width="2.8" height="1.35" fill="#86aa6e"/><rect x="1178.5" y="358.9" width="0.8" height="1.35" fill="#86aa6e"/><rect x="1180.5" y="358.9" width="4.8" height="1.35" fill="#86aa6e"/><rect x="1186.6" y="358.9" width="1.8" height="1.35" fill="#86aa6e"/><rect x="1189.7" y="358.9" width="2.8" height="1.35" fill="#86aa6e"/><rect x="1193.7" y="358.9" width="8.9" height="1.35" fill="#86aa6e"/><rect x="1163.3" y="360.9" width="0.8" height="1.35" fill="#86aa6e"/><rect x="1165.3" y="360.9" width="5.8" height="1.35" fill="#86aa6e"/><rect x="1172.4" y="360.9" width="0.8" height="1.35" fill="#86aa6e"/><rect x="1174.4" y="360.9" width="2.8" height="1.35" fill="#86aa6e"/><rect x="1178.5" y="360.9" width="0.8" height="1.35" fill="#86aa6e"/><rect x="1180.5" y="360.9" width="4.8" height="1.35" fill="#86aa6e"/><rect x="1186.6" y="360.9" width="1.8" height="1.35" fill="#86aa6e"/><rect x="1189.7" y="360.9" width="2.8" height="1.35" fill="#86aa6e"/><rect x="1193.7" y="360.9" width="8.9" height="1.35" fill="#86aa6e"/><rect x="1163.3" y="362.9" width="0.8" height="1.35" fill="#86aa6e"/><rect x="1165.3" y="362.9" width="5.8" height="1.35" fill="#86aa6e"/><rect x="1172.4" y="362.9" width="6.9" height="1.35" fill="#86aa6e"/><rect x="1180.5" y="362.9" width="2.8" height="1.35" fill="#86aa6e"/><rect x="1184.6" y="362.9" width="11.9" height="1.35" fill="#86aa6e"/><rect x="1197.8" y="362.9" width="1.8" height="1.35" fill="#86aa6e"/><rect x="1200.8" y="362.9" width="1.8" height="1.35" fill="#86aa6e"/><rect x="1203.9" y="362.9" width="3.8" height="1.35" fill="#86aa6e"/><rect x="1209.0" y="362.9" width="1.8" height="1.35" fill="#86aa6e"/><rect x="1212.0" y="362.9" width="1.8" height="1.35" fill="#86aa6e"/><rect x="1215.0" y="362.9" width="3.8" height="1.35" fill="#86aa6e"/><rect x="1220.1" y="362.9" width="1.8" height="1.35" fill="#86aa6e"/><rect x="1223.2" y="362.9" width="5.8" height="1.35" fill="#86aa6e"/><rect x="1163.3" y="364.9" width="1.8" height="1.35" fill="#86aa6e"/><rect x="1162.3" y="366.9" width="7.9" height="1.35" fill="#6ba3dc"/><rect x="1171.4" y="366.9" width="7.9" height="1.35" fill="#dcdcaa"/><rect x="1179.5" y="366.9" width="0.8" height="1.35" fill="#eacb55"/><rect x="1180.5" y="366.9" width="4.8" height="1.35" fill="#84cfb8"/><rect x="1186.6" y="366.9" width="0.8" height="1.35" fill="#a8d6f8"/><rect x="1187.6" y="366.9" width="0.8" height="1.35" fill="#d4d4d4"/><rect x="1189.7" y="366.9" width="6.9" height="1.35" fill="#84cfb8"/><rect x="1197.8" y="366.9" width="0.8" height="1.35" fill="#a8d6f8"/><rect x="1198.8" y="366.9" width="0.8" height="1.35" fill="#d4d4d4"/><rect x="1200.8" y="366.9" width="6.9" height="1.35" fill="#84cfb8"/><rect x="1209.0" y="366.9" width="0.8" height="1.35" fill="#a8d6f8"/><rect x="1210.0" y="366.9" width="0.8" height="1.35" fill="#d4d4d4"/><rect x="1212.0" y="366.9" width="4.8" height="1.35" fill="#84cfb8"/><rect x="1218.1" y="366.9" width="5.8" height="1.35" fill="#6ba3dc"/><rect x="1225.2" y="366.9" width="6.9" height="1.35" fill="#a8d6f8"/><rect x="1232.3" y="366.9" width="0.8" height="1.35" fill="#eacb55"/><rect x="1234.3" y="366.9" width="5.8" height="1.35" fill="#6ba3dc"/><rect x="1241.4" y="366.9" width="11.9" height="1.35" fill="#d4d4d4"/><rect x="1254.6" y="366.9" width="5.9" height="1.35" fill="#d4d4d4"/><rect x="1166.3" y="369.0" width="6.9" height="1.35" fill="#84cfb8"/><rect x="1174.4" y="369.0" width="5.8" height="1.35" fill="#d4d4d4"/><rect x="1181.5" y="369.0" width="0.8" height="1.35" fill="#d4d4d4"/><rect x="1183.6" y="369.0" width="4.8" height="1.35" fill="#84cfb8"/><rect x="1188.7" y="369.0" width="0.8" height="1.35" fill="#d4d4d4"/><rect x="1189.7" y="369.0" width="6.9" height="1.35" fill="#dcdcaa"/><rect x="1196.8" y="369.0" width="0.8" height="1.35" fill="#eacb55"/><rect x="1197.8" y="369.0" width="16.0" height="1.35" fill="#84cfb8"/><rect x="1214.0" y="369.0" width="0.8" height="1.35" fill="#d4d4d4"/><rect x="1215.0" y="369.0" width="22.1" height="1.35" fill="#dcdcaa"/><rect x="1237.4" y="369.0" width="0.8" height="1.35" fill="#d077cf"/><rect x="1238.4" y="369.0" width="8.9" height="1.35" fill="#dcdcaa"/><rect x="1247.5" y="369.0" width="0.8" height="1.35" fill="#4d9fea"/><rect x="1248.5" y="369.0" width="6.9" height="1.35" fill="#a8d6f8"/><rect x="1255.6" y="369.0" width="0.8" height="1.35" fill="#4d9fea"/><rect x="1256.7" y="369.0" width="0.8" height="1.35" fill="#d077cf"/><rect x="1257.7" y="369.0" width="0.8" height="1.35" fill="#d4d4d4"/><rect x="1259.7" y="369.0" width="0.8" height="1.35" fill="#a8d6f8"/><rect x="1166.3" y="373.0" width="1.8" height="1.35" fill="#c794c9"/><rect x="1169.4" y="373.0" width="0.8" height="1.35" fill="#eacb55"/><rect x="1170.4" y="373.0" width="7.9" height="1.35" fill="#d4d4d4"/><rect x="1178.5" y="373.0" width="0.8" height="1.35" fill="#d077cf"/><rect x="1179.5" y="373.0" width="5.8" height="1.35" fill="#d4d4d4"/><rect x="1185.6" y="373.0" width="0.8" height="1.35" fill="#d077cf"/><rect x="1186.6" y="373.0" width="0.8" height="1.35" fill="#eacb55"/><rect x="1188.7" y="373.0" width="0.8" height="1.35" fill="#eacb55"/><rect x="1170.4" y="375.0" width="5.8" height="1.35" fill="#c794c9"/><rect x="1177.5" y="375.0" width="26.1" height="1.35" fill="#84cfb8"/><rect x="1203.9" y="375.0" width="1.8" height="1.35" fill="#eacb55"/><rect x="1205.9" y="375.0" width="0.8" height="1.35" fill="#d4d4d4"/><rect x="1166.3" y="377.0" width="0.8" height="1.35" fill="#4d9fea"/><rect x="1166.3" y="381.0" width="0.8" height="1.35" fill="#eacb55"/><rect x="1167.3" y="381.0" width="6.9" height="1.35" fill="#84cfb8"/><rect x="1175.5" y="381.0" width="6.9" height="1.35" fill="#d4d4d4"/><rect x="1183.6" y="381.0" width="6.9" height="1.35" fill="#84cfb8"/><rect x="1191.7" y="381.0" width="5.8" height="1.35" fill="#d4d4d4"/><rect x="1198.8" y="381.0" width="4.8" height="1.35" fill="#84cfb8"/><rect x="1204.9" y="381.0" width="5.8" height="1.35" fill="#6ba3dc"/><rect x="1212.0" y="381.0" width="3.8" height="1.35" fill="#d4d4d4"/><rect x="1216.1" y="381.0" width="0.8" height="1.35" fill="#eacb55"/><rect x="1218.1" y="381.0" width="0.8" height="1.35" fill="#d4d4d4"/><rect x="1220.1" y="381.0" width="2.8" height="1.35" fill="#6ba3dc"/><rect x="1223.2" y="381.0" width="0.8" height="1.35" fill="#d4d4d4"/><rect x="1224.2" y="381.0" width="5.8" height="1.35" fill="#dcdcaa"/><rect x="1230.3" y="381.0" width="0.8" height="1.35" fill="#eacb55"/><rect x="1231.3" y="381.0" width="6.9" height="1.35" fill="#a8d6f8"/><rect x="1238.4" y="381.0" width="0.8" height="1.35" fill="#d4d4d4"/><rect x="1240.4" y="381.0" width="0.8" height="1.35" fill="#d077cf"/><rect x="1241.4" y="381.0" width="6.9" height="1.35" fill="#84cfb8"/><rect x="1248.5" y="381.0" width="0.8" height="1.35" fill="#d4d4d4"/><rect x="1250.6" y="381.0" width="6.9" height="1.35" fill="#84cfb8"/><rect x="1257.7" y="381.0" width="0.8" height="1.35" fill="#d4d4d4"/><rect x="1259.7" y="381.0" width="0.8" height="1.35" fill="#84cfb8"/><rect x="1166.3" y="385.1" width="1.8" height="1.35" fill="#86aa6e"/><rect x="1169.4" y="385.1" width="3.8" height="1.35" fill="#86aa6e"/><rect x="1174.4" y="385.1" width="3.8" height="1.35" fill="#86aa6e"/><rect x="1179.5" y="385.1" width="4.8" height="1.35" fill="#86aa6e"/><rect x="1185.6" y="385.1" width="2.8" height="1.35" fill="#86aa6e"/><rect x="1189.7" y="385.1" width="4.8" height="1.35" fill="#86aa6e"/><rect x="1166.3" y="387.1" width="0.8" height="1.35" fill="#eacb55"/><rect x="1167.3" y="387.1" width="3.8" height="1.35" fill="#84cfb8"/><rect x="1172.4" y="387.1" width="7.9" height="1.35" fill="#d4d4d4"/><rect x="1180.5" y="387.1" width="0.8" height="1.35" fill="#eacb55"/><rect x="1182.6" y="387.1" width="0.8" height="1.35" fill="#d4d4d4"/><rect x="1184.6" y="387.1" width="10.9" height="1.35" fill="#d4d4d4"/><rect x="1195.8" y="387.1" width="0.8" height="1.35" fill="#eacb55"/><rect x="1197.8" y="387.1" width="5.8" height="1.35" fill="#d4d4d4"/><rect x="1204.9" y="387.1" width="4.8" height="1.35" fill="#d4d4d4"/><rect x="1211.0" y="387.1" width="1.8" height="1.35" fill="#eacb55"/><rect x="1213.0" y="387.1" width="3.8" height="1.35" fill="#d4d4d4"/><rect x="1217.1" y="387.1" width="0.8" height="1.35" fill="#eacb55"/><rect x="1218.1" y="387.1" width="0.8" height="1.35" fill="#d4d4d4"/><rect x="1166.3" y="389.1" width="1.8" height="1.35" fill="#c794c9"/><rect x="1169.4" y="389.1" width="0.8" height="1.35" fill="#eacb55"/><rect x="1170.4" y="389.1" width="7.9" height="1.35" fill="#d4d4d4"/><rect x="1178.5" y="389.1" width="0.8" height="1.35" fill="#eacb55"/><rect x="1180.5" y="389.1" width="0.8" height="1.35" fill="#eacb55"/><rect x="1170.4" y="391.1" width="5.8" height="1.35" fill="#c794c9"/><rect x="1177.5" y="391.1" width="24.1" height="1.35" fill="#84cfb8"/><rect x="1201.8" y="391.1" width="1.8" height="1.35" fill="#eacb55"/><rect x="1203.9" y="391.1" width="0.8" height="1.35" fill="#d4d4d4"/><rect x="1166.3" y="393.1" width="0.8" height="1.35" fill="#4d9fea"/><rect x="1162.3" y="395.1" width="0.8" height="1.35" fill="#4d9fea"/><rect x="1158.2" y="397.2" width="0.8" height="1.35" fill="#4d9fea"/></g></svg>
<div class="a" style="left:1261.7px;top:133px;width:18.3px;height:558px;background:#1f1f1f;border-left:1px solid #282828"></div>
<div class="a" style="left:1262px;top:195.7px;width:7px;height:8px;background:#587c2a"></div>
<div class="a" style="left:1262px;top:210.6px;width:7px;height:8.4px;background:#b04a45"></div>
<div class="a" style="left:1262px;top:234.4px;width:7px;height:8.3px;background:#2f6a9c"></div>
<div class="a" style="left:1262px;top:243.7px;width:7px;height:15.5px;background:#2f6a9c"></div>
<div class="a" style="left:1262px;top:338px;width:7px;height:8px;background:#587c2a"></div>
<div class="a" style="left:1262px;top:388px;width:7px;height:10.8px;background:#587c2a"></div>
<div class="a" style="left:1262px;top:421.5px;width:7px;height:8.3px;background:#587c2a"></div>
<div class="a" style="left:1262px;top:550.4px;width:18px;height:78px;background:#484848"></div>
<div class="a" style="left:1262px;top:587.5px;width:8px;height:4px;background:#6a9a40"></div>
<div class="a" style="left:1270px;top:587.5px;width:6px;height:4px;background:#b0b0b0"></div>
<div class="a" style="left:0;top:691px;width:1280px;height:29px;background:#3878c8"></div>
<div class="a" style="left:0;top:691px;width:47.8px;height:29px;background:#3a7d57"></div>
<svg style="left:0;top:0" width="1280" height="720"><path d="M16.6 703.3 L22.2 709.2 L16.6 714.6 M28.7 698.3 L23.1 703.7 L28.7 709.2" stroke="#ffffff" stroke-width="1.5" fill="none"/><circle cx="61.6" cy="699.6" r="2.7" stroke="#ffffff" stroke-width="1.5" fill="none"/><circle cx="61.6" cy="713.5" r="2.7" stroke="#ffffff" stroke-width="1.5" fill="none"/><circle cx="70.6" cy="703.4" r="2.7" stroke="#ffffff" stroke-width="1.5" fill="none"/><path d="M61.6 702.3 V710.8 M69.2 705.8 L67.8 708 Q67.2 709 66 709 H61.6" stroke="#ffffff" stroke-width="1.5" fill="none"/><path d="M151.8 703.6 A7.25 7.25 0 0 1 165.8 706.8 M165.3 709.4 A7.25 7.25 0 0 1 151.3 706.2" stroke="#ffffff" stroke-width="1.7" fill="none"/><path d="M163 704.6 L165.8 707.5 L168.6 704.6 M148.5 708.4 L151.3 705.5 L154.1 708.4" stroke="#ffffff" stroke-width="1.7" fill="none" stroke-linecap="round" stroke-linejoin="round"/><path d="M191.3 701 V713 M186.6 708.3 L191.3 713 L196 708.3" stroke="#ffffff" stroke-width="1.8" fill="none" stroke-linecap="round" stroke-linejoin="round"/><path d="M221 713 V701 M216.3 705.7 L221 701 L225.7 705.7" stroke="#ffffff" stroke-width="1.8" fill="none" stroke-linecap="round" stroke-linejoin="round"/><circle cx="258.2" cy="706.5" r="8" stroke="#ffffff" stroke-width="1.4" fill="none"/><path d="M254.5 702.8 L261.9 710.2 M261.9 702.8 L254.5 710.2" stroke="#ffffff" stroke-width="1.4"/><path d="M299 698 L307.5 714.5 H290.5 Z" stroke="#ffffff" stroke-width="1.4" fill="none" stroke-linejoin="round"/><path d="M299 703.5 V709" stroke="#ffffff" stroke-width="1.4"/><circle cx="299" cy="711.5" r="0.9" fill="#ffffff"/><circle cx="359.4" cy="703.6" r="1.9" stroke="#ffffff" stroke-width="1.4" fill="none"/><path d="M355 715 L359.4 705.6 L363.8 715 M356.4 711.5 H362.4" stroke="#ffffff" stroke-width="1.4" fill="none" stroke-linejoin="round"/><path d="M355.4 699.3 A5.6 5.6 0 0 0 355.4 708 M363.4 699.3 A5.6 5.6 0 0 1 363.4 708 M352.6 697.6 A8.8 8.8 0 0 0 352.6 709.6 M366.2 697.6 A8.8 8.8 0 0 1 366.2 709.6" stroke="#ffffff" stroke-width="1.4" fill="none" stroke-linecap="round"/><g transform="translate(408.75 697.5) scale(0.536) translate(-15 -347)"><path d="M16.3 369.3 C17 359 25 353.5 35.6 353.3 V348.2 L49 357.6 L35.6 366.8 V361.5 C28 361.2 21 363.5 16.3 369.3 Z" stroke="#ffffff" stroke-width="3" fill="none" stroke-linejoin="round"/><circle cx="29.5" cy="375.1" r="5.6" stroke="#ffffff" stroke-width="3" fill="none"/></g><path d="M1092.2 710.7 A7.2 7.2 0 1 1 1100.4 710.7 M1093.6 708 A4.2 4.2 0 1 1 1099 708" stroke="#ffffff" stroke-width="1.5" fill="none" stroke-linecap="round"/><circle cx="1096.3" cy="704.8" r="1.9" fill="#ffffff"/><rect x="1094.9" y="707.6" width="2.8" height="8" rx="1.4" fill="#ffffff"/><rect x="1197.6" y="699.9" width="8.4" height="7.4" rx="3" stroke="#ffffff" stroke-width="2" fill="none"/><rect x="1207" y="699.9" width="8.4" height="7.4" rx="3" stroke="#ffffff" stroke-width="2" fill="none"/><path d="M1196 712 Q1196 707.2 1199.5 707.2 H1213.5 Q1217 707.2 1217 712 Q1217 716.6 1206.5 716.6 Q1196 716.6 1196 712 Z" fill="#ffffff"/><rect x="1203.3" y="709.6" width="1.8" height="3.8" rx="0.9" fill="#3878c8"/><rect x="1208.1" y="709.6" width="1.8" height="3.8" rx="0.9" fill="#3878c8"/><path d="M1243 711.5 Q1245 709.5 1245 705 Q1245 698.5 1250 698.5 Q1255 698.5 1255 705 Q1255 709.5 1257 711.5 Z" stroke="#ffffff" stroke-width="1.4" fill="none" stroke-linejoin="round"/><path d="M1248 713.5 Q1250 716 1252 713.5" stroke="#ffffff" stroke-width="1.4" fill="none"/></svg>
<div class="a ui" style="left:80.2px;top:694.5px;font-size:18px;line-height:24px;color:#ffffff;letter-spacing:0.6px">main*+</div>
<div class="a ui" style="left:173.2px;top:694.5px;font-size:18px;line-height:24px;color:#ffffff;letter-spacing:0px">0</div>
<div class="a ui" style="left:203px;top:694.5px;font-size:18px;line-height:24px;color:#ffffff;letter-spacing:0px">1</div>
<div class="a ui" style="left:273.5px;top:694.5px;font-size:18px;line-height:24px;color:#ffffff;letter-spacing:0px">1</div>
<div class="a ui" style="left:314.2px;top:694.5px;font-size:18px;line-height:24px;color:#ffffff;letter-spacing:0px">0</div>
<div class="a ui" style="left:375px;top:694.5px;font-size:18px;line-height:24px;color:#ffffff;letter-spacing:0px">0</div>
<div class="a ui" style="left:431.5px;top:694.5px;font-size:18px;line-height:24px;color:#ffffff;letter-spacing:0.25px">Live Share</div>
<div class="a ui" style="left:609px;top:694.5px;font-size:18px;line-height:24px;color:#ffffff;letter-spacing:0.5px">Ln 126, Col 26</div>
<div class="a ui" style="left:753.5px;top:694.5px;font-size:18px;line-height:24px;color:#ffffff;letter-spacing:0.3px">Spaces: 4</div>
<div class="a ui" style="left:858.3px;top:694.5px;font-size:18px;line-height:24px;color:#ffffff;letter-spacing:0.5px">UTF-8</div>
<div class="a ui" style="left:933px;top:694.5px;font-size:18px;line-height:24px;color:#ffffff;letter-spacing:1.5px">LF</div>
<div class="a ui" style="left:977px;top:694.5px;font-size:18px;line-height:24px;color:#ffffff;letter-spacing:0px">{ }</div>
<div class="a ui" style="left:1003.5px;top:694.5px;font-size:18px;line-height:24px;color:#ffffff;letter-spacing:0.5px">Solidity</div>
<div class="a ui" style="left:1112px;top:694.5px;font-size:18px;line-height:24px;color:#ffffff;letter-spacing:0px">Go Live</div>
</div></body></html>
